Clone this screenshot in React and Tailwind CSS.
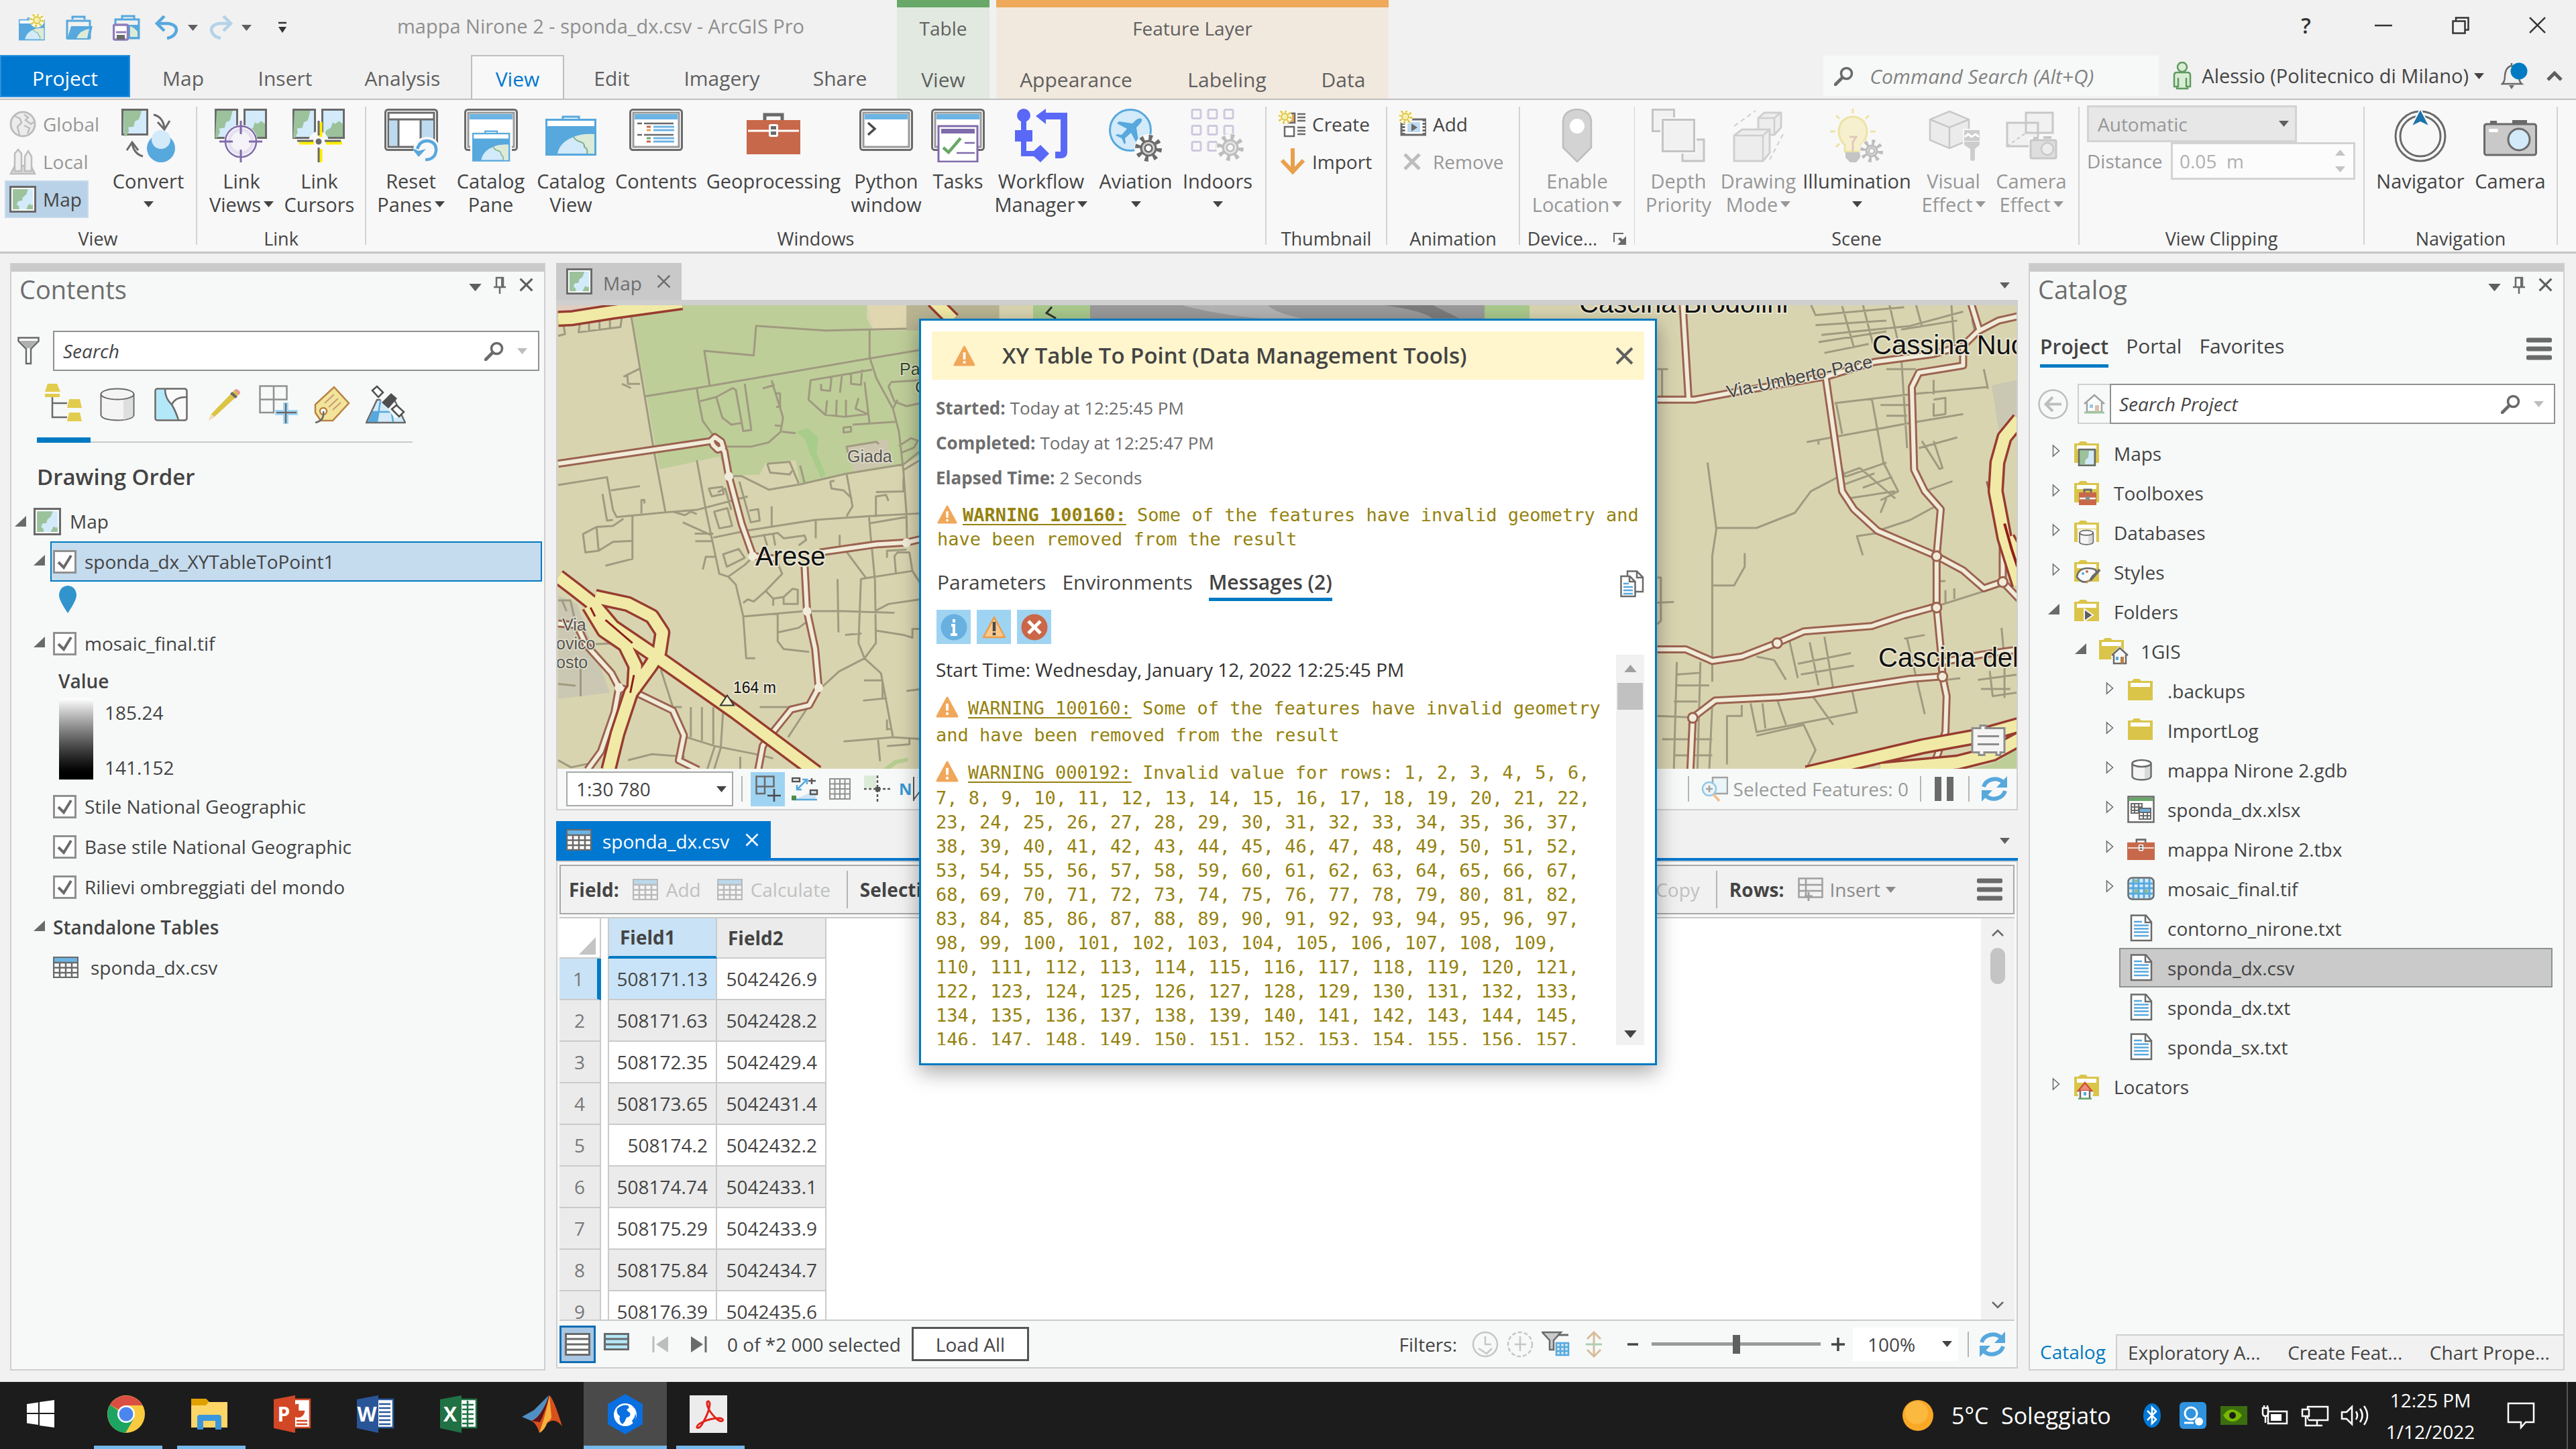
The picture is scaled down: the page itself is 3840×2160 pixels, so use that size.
import React from "react";

const GRAY = "#6a6a6a";
const BLUE = "#57a8dd";
const PALE = "#d2eaf9";
const GREEN = "#9cc29c";
const PURPLE = "#7f6bab";

function Svg({ w, h, vb, className = "", children }) {
  return (
    <svg width={w} height={h} viewBox={vb || `0 0 ${w} ${h}`} fill="none" className={`shrink-0 ${className}`} aria-hidden="true">
      {children}
    </svg>
  );
}

/* ---------- small shared glyphs ---------- */

const Caret = ({ className = "" }) => (
  <Svg w={15} h={9} className={`inline-block ${className}`}>
    <path d="M0 0h15L7.500 9z" fill="currentColor" />
  </Svg>
);

const Cross = ({ size = 20, sw = 3, className = "" }) => (
  <Svg w={size} h={size} vb="0 0 20 20" className={className}>
    <path d="M1.500 1.500l17 17M18.500 1.500l-17 17" stroke="currentColor" strokeWidth={sw} />
  </Svg>
);

const Pin = () => (
  <Svg w={18} h={26}>
    <path d="M4 16V2h10v14M0 16h18M9 16v10" stroke={GRAY} strokeWidth="2.500" />
    <path d="M11 3h2v12h-2z" fill={GRAY} />
  </Svg>
);

const Magnifier = ({ size = 29 }) => (
  <Svg w={size} h={size} vb="0 0 29 29">
    <circle cx="18.500" cy="10.500" r="8" stroke={GRAY} strokeWidth="3.600" />
    <path d="M12.500 16.500L2 27" stroke={GRAY} strokeWidth="4.600" strokeLinecap="round" />
  </Svg>
);

const Hamburger = () => (
  <Svg w={38} h={34}>
    <path d="M3 4h32M3 17h32M3 30h32" stroke={GRAY} strokeWidth="7" strokeLinecap="round" />
  </Svg>
);

const Refresh = () => (
  <Svg w={42} h={40}>
    <path d="M5 17C8 6 24 1 34 10M37 23C34 34 18 39 8 30" stroke={BLUE} strokeWidth="6" />
    <path d="M40 1v17H24zM2 39V22h16z" fill={BLUE} />
  </Svg>
);

const WarnIcon = ({ w = 32, className = "" }) => (
  <Svg w={w} h={w} vb="0 0 32 32" className={className}>
    <path d="M16 3L30 29H2z" fill="#f0a75a" stroke="#f0a75a" strokeWidth="3" strokeLinejoin="round" />
    <path d="M16 11v10M16 23.500v3.500" stroke="#fff" strokeWidth="3.600" />
  </Svg>
);

const Sun = ({ x, y, r = 5 }) => (
  <g>
    <circle cx={x} cy={y} r={r + 6} fill="#fffbe0" />
    <circle cx={x} cy={y} r={r + 3.500} stroke="#dcc445" strokeWidth="4" strokeDasharray="2.600 4.080" />
    <circle cx={x} cy={y} r={r} fill="#f5efae" stroke="#dcc445" strokeWidth="2" />
  </g>
);

const Gear = ({ x, y, r = 12, color = GRAY, fill = "#cfcfcf" }) => (
  <g>
    <circle cx={x} cy={y} r={r + 8} fill="#f8f8f8" />
    <circle cx={x} cy={y} r={r + 3} stroke={color} strokeWidth="8" strokeDasharray={`${(r + 3) * 0.33} ${(r + 3) * 0.455}`} />
    <circle cx={x} cy={y} r={r - 2} fill={fill} stroke={color} strokeWidth="3" />
    <circle cx={x} cy={y} r={r / 2.400} fill="#f8f8f8" stroke={color} strokeWidth="2.500" />
  </g>
);

const Tile = ({ x = 0, y = 0, w = 38, h = 38, flip }) => (
  <g>
    <rect x={x + 1.500} y={y + 1.500} width={w - 3} height={h - 3} fill={PALE} stroke={GRAY} strokeWidth="3" />
    {flip ? (
      <path d={`M${x + w - 3} ${y + h / 2}l-6 -4l-5 4l-4 -2l-3 8l-7 4l-2 ${h / 2 - 13}h27z`} fill={GREEN} />
    ) : (
      <path d={`M${x + 3} ${y + 3}h${w * 0.68}l-4 ${h * 0.32}l-6 3l-2 8l-8 1l1 6l-4 ${h * 0.18}h-3z`} fill={GREEN} />
    )}
  </g>
);

const MapIcon = ({ size = 40 }) => (
  <Svg w={size} h={size} vb="0 0 40 40">
    <rect x="1.500" y="1.500" width="37" height="37" fill="#fff" stroke={GRAY} strokeWidth="3" />
    <path d="M5 5h30v30H5z" fill={PALE} />
    <path d="M5 5h23l-3 8l-5 4l-1 5l-6 1l-2 5l3 2l1 5H5z" fill={GREEN} />
    <path d="M35 35H25l4-8l4 2l2-1z" fill={GREEN} />
  </Svg>
);

const Bag = ({ w = 76, h = 60 }) => (
  <Svg w={w} h={h} vb="0 0 76 60">
    <BagShape />
  </Svg>
);

const BagShape = () => (
  <g>
    <path d="M26 7V2h24v5" stroke={BLUE} strokeWidth="3" />
    <path d="M0 5h76v55H0z" fill={BLUE} />
    <path d="M3 8h70v8H3z" fill="#fff" />
    <path d="M18 57C22 38 42 27 73 28V57z" fill={PALE} />
    <path d="M42 32C52 28 62 27 73 28V57H62q2-8-4-10q2-6-7-8q-6-2-9-7z" fill="#dcebd8" />
    <path d="M42 32q4 6 9 7q8 2 7 8q6 3 4 10" stroke="#7fb08a" strokeWidth="2" />
  </g>
);

const Monitor = ({ children }) => (
  <g>
    <rect x="1.500" y="1.500" width="77" height="60" rx="4" fill="#fff" stroke={GRAY} strokeWidth="3" />
    <rect x="6" y="6" width="68" height="51" fill="#fff" stroke="#9a9a9a" strokeWidth="3" />
    <path d="M8 8h64v8H8z" fill="#6cb4e4" />
    {children}
  </g>
);

const TableIcon = ({ w = 38, h = 32, faded }) => (
  <Svg w={w} h={h} vb="0 0 38 32" className={faded ? "opacity-40" : ""}>
    <rect x="1" y="1" width="36" height="30" fill="#fff" stroke={GRAY} strokeWidth="2.500" />
    <path d="M2 2h34v6H2z" fill="#6cb4e4" />
    <path d="M1 9h36M1 16.500h36M1 24h36M10 9v22M19 9v22M28 9v22" stroke={GRAY} strokeWidth="2.500" />
  </Svg>
);

/* ---------- ribbon icons, all on an 80px box ---------- */

const ConvertIcon = () => (
  <Svg w={80} h={80}>
    <Tile w={40} h={40} />
    <path d="M48 9q14 3 16 20M54 20l10 11l8-13" stroke={GRAY} strokeWidth="3" />
    <path d="M32 71q-14-4-16-20M8 62l8-12l9 12" stroke={GRAY} strokeWidth="3" />
    <circle cx="59" cy="59" r="21" fill={BLUE} />
    <circle cx="59" cy="46" r="14" fill={PALE} />
  </Svg>
);

const LinkViewsIcon = () => (
  <Svg w={80} h={80}>
    <Tile w={35} h={45} />
    <Tile x={43} w={35} h={45} flip />
    <circle cx="39" cy="49" r="25" fill="#f8f8f8" />
    <circle cx="39" cy="49" r="20" fill="#e6e1f0" />
    <circle cx="39" cy="49" r="15" fill="#f5f3f8" />
    <circle cx="39" cy="49" r="23" stroke={PURPLE} strokeWidth="2.500" />
    <path d="M39 18v20M39 61v19M7 49h20M51 49h20" stroke={PURPLE} strokeWidth="3" />
  </Svg>
);

const LinkCursorsIcon = () => (
  <Svg w={80} h={80}>
    <Tile w={35} h={45} />
    <Tile x={43} w={35} h={45} flip />
    <circle cx="39" cy="49" r="15" fill="#f8f8f8" />
    <path d="M42 20v22M42 60v20M10 51h22M50 51h24" stroke="#fdee00" strokeWidth="5" />
    <path d="M39 18v22M39 58v22M7 48h24M48 48h24" stroke={GRAY} strokeWidth="3" />
    <circle cx="39" cy="49" r="4.500" fill={GRAY} />
  </Svg>
);

const ResetPanesIcon = () => (
  <Svg w={80} h={80}>
    <rect x="1.500" y="1.500" width="77" height="60" rx="4" fill="#fff" stroke={GRAY} strokeWidth="3" />
    <rect x="6" y="6" width="68" height="51" fill="#fff" stroke={GRAY} strokeWidth="3" />
    <path d="M7 17h14v38H7zM54 17h19v38H54z" fill="#bddaf0" />
    <path d="M6 16h68M21 16v40M54 16v40" stroke={GRAY} strokeWidth="3" />
    <circle cx="63" cy="62" r="20" fill="#f8f8f8" />
    <path d="M49 60q4-13 16-12q13 2 12 15q-2 13-16 13" stroke={BLUE} strokeWidth="4.500" />
    <path d="M40 58l11 14l11-12l-11 3z" fill={BLUE} />
  </Svg>
);

const CatalogPaneIcon = () => (
  <Svg w={80} h={80}>
    <Monitor />
    <path d="M9 34h62v46H9z" fill="#f8f8f8" />
    <g transform="translate(12 32) scale(.74 .78)">
      <BagShape />
    </g>
  </Svg>
);

const ContentsIcon = () => (
  <Svg w={80} h={80}>
    <Monitor>
      <path d="M12 22h7M22 22h44M12 39h7M22 39h44" stroke={GRAY} strokeWidth="2.500" />
      <path d="M36 27h31M36 32h31M36 44h31M36 49h31" stroke="#6cb4e4" strokeWidth="3" />
      <path d="M26 27h6M26 49h6" stroke="#c8684a" strokeWidth="3" />
      <path d="M26 32h6" stroke="#e9a04c" strokeWidth="3" />
      <path d="M26 44h6" stroke="#68a868" strokeWidth="3" />
    </Monitor>
  </Svg>
);

const ToolboxShape = () => (
  <g>
    <path d="M27 18V9h26v9" stroke={GRAY} strokeWidth="5" />
    <path d="M0 17h80v51H0z" fill="#c8684a" />
    <path d="M2 33h76" stroke="#fff" strokeWidth="3" />
    <rect x="33" y="23" width="14" height="19" rx="3" fill="#fff" />
    <path d="M36 26h8v5h-8zM36 34h8v5h-8z" fill={GRAY} />
  </g>
);

const ToolboxIcon = () => (
  <Svg w={80} h={80}>
    <ToolboxShape />
  </Svg>
);

const PythonIcon = () => (
  <Svg w={80} h={80}>
    <Monitor>
      <path d="M13 21l10 9l-10 9" stroke="#4a4a4a" strokeWidth="3.500" />
    </Monitor>
  </Svg>
);

const TasksIcon = () => (
  <Svg w={80} h={80}>
    <Monitor />
    <rect x="11" y="26" width="58" height="53" fill="#fff" stroke={PURPLE} strokeWidth="3" />
    <path d="M15 30h50v7H15z" fill={PURPLE} />
    <path d="M50 51h15M38 66h27" stroke={PURPLE} strokeWidth="2.500" />
    <path d="M18 58l8 7l18-21" stroke="#68a868" strokeWidth="4.500" />
  </Svg>
);

const WorkflowIcon = () => (
  <Svg w={80} h={80} className="text-[#5a68f7]">
    <circle cx="14" cy="10" r="10" fill="currentColor" />
    <path d="M1 32h26v17H1z" fill="currentColor" />
    <path d="M14 10v57h26" stroke="currentColor" strokeWidth="8" />
    <path d="M39 54l13 13l-13 13l-10-9v-8z" fill="currentColor" />
    <path d="M42 11h32v54q0 4-4 4h-9" stroke="currentColor" strokeWidth="10" />
    <path d="M47 0v23L32 11z" fill="currentColor" />
  </Svg>
);

const AviationIcon = () => (
  <Svg w={80} h={80}>
    <circle cx="32" cy="32" r="30.500" fill={PALE} stroke={BLUE} strokeWidth="3" />
    <path d="M49 15c-5-2-8 1-14 7l-20-3-3 3 15 8-8 9-7-1-2 2 9 4 4 9 2-2-1-7 9-8 8 15 3-3-3-20c6-6 9-9 8-13z" fill={BLUE} />
    <Gear x={59} y={59} r={13} />
  </Svg>
);

const IndoorsIcon = () => (
  <Svg w={80} h={80}>
    {[0, 24, 48].map((y) =>
      [0, 24, 48].map((x) => <rect key={`${x}-${y}`} x={x + 2} y={y + 1.500} width="13" height="13" rx="2" stroke="#cfc8e0" strokeWidth="3" />)
    )}
    <Gear x={59} y={58} r={13} color="#bdbdbd" fill="#e4e4e4" />
  </Svg>
);

const LocationIcon = () => (
  <Svg w={80} h={80}>
    <path d="M19 58V18Q21 2 40 1Q59 2 61 18V58L40 79z" fill="#d3d3d3" stroke="#bdbdbd" strokeWidth="2.500" />
    <ellipse cx="40" cy="26" rx="11" ry="11" fill="#fff" />
  </Svg>
);

const DepthIcon = () => (
  <Svg w={80} h={80} className="text-[#c4c4c4]">
    <path d="M1.500 1.500h32v32h-32zM46 46h32v32H46z" fill="#f1f1f1" stroke="currentColor" strokeWidth="3" />
    <path d="M13 13h54v54H13z" fill="#f8f8f8" />
    <path d="M16.500 16.500h47v47h-47z" fill="#f1f1f1" stroke="currentColor" strokeWidth="3" />
  </Svg>
);

const DrawingModeIcon = () => (
  <Svg w={80} h={80} className="text-[#cfcfcf]">
    <path d="M40 14l9-8h25v22l-10 11H40z" fill="#ededed" stroke="currentColor" strokeWidth="3" />
    <path d="M40 14h24v24M64 14l9-8" stroke="currentColor" strokeWidth="2.500" />
    <path d="M4 40l12-9h41v35L47 78H4z" fill="#ededed" stroke="currentColor" strokeWidth="3" />
    <path d="M4 40h43v37M47 40l10-9" stroke="currentColor" strokeWidth="2.500" />
    <path d="M4 26L36 3M77 38L55 80" stroke="currentColor" strokeWidth="2" strokeDasharray="7 5" />
  </Svg>
);

const BulbIcon = () => (
  <Svg w={80} h={80}>
    <path d="M34 0v7M9 10l5 5M58 10l-5 5M0 34h8M60 34h8M9 57l5-5" stroke="#ede3a4" strokeWidth="3" />
    <path d="M22 64V54Q13 46 13 33Q15 13 34 12Q53 13 55 33Q55 46 46 54V64z" fill="#f6f0cf" stroke="#ede3a4" strokeWidth="3" />
    <path d="M29 42h10l-5 8v14" stroke="#e0c8b8" strokeWidth="3" />
    <path d="M23 65h22v8l-6 7h-9l-7-7z" fill="#c4c4c4" />
    <Gear x={62} y={63} r={10} color="#bdbdbd" fill="#e4e4e4" />
  </Svg>
);

const VisualIcon = () => (
  <Svg w={80} h={80} className="text-[#c8c8c8]">
    <path d="M34 4l29 12v31L34 59L5 47V16z" fill="#ebebeb" stroke="currentColor" strokeWidth="2.500" />
    <path d="M5 16l29 12l29-12M34 28v31" stroke="currentColor" strokeWidth="2.500" />
    <path d="M54 30h26v50H54z" fill="#f8f8f8" />
    <path d="M56 32h23v16H56zM56 49h23v5l-7 6v16q-4 4-7 0V60l-9-6z" fill="#cdcdcd" />
    <path d="M57 42l5-4l5 4l6-4l5 4" stroke="#fff" strokeWidth="3" />
  </Svg>
);

const CameraEffectIcon = () => (
  <Svg w={80} h={80} className="text-[#c8c8c8]">
    <path d="M32 6h40v30H32zM4 21h46v35H4z" fill="#f1f1f1" stroke="currentColor" strokeWidth="3" />
    <path d="M4 56l28-20" stroke="currentColor" strokeWidth="2" strokeDasharray="5 4" />
    <path d="M36 42h44v34H36z" fill="#f8f8f8" />
    <rect x="39" y="47" width="38" height="27" rx="2" fill="#dedede" stroke="currentColor" strokeWidth="3" />
    <circle cx="64" cy="60" r="9" fill="#ececec" stroke="currentColor" strokeWidth="2.500" />
    <path d="M43 44h8M58 43h12" stroke="currentColor" strokeWidth="4" />
  </Svg>
);

const NavigatorIcon = () => (
  <Svg w={80} h={80}>
    <circle cx="40" cy="41" r="37" stroke={GRAY} strokeWidth="3" />
    <circle cx="40" cy="41" r="30" stroke={GRAY} strokeWidth="3" />
    <path d="M40 0L54 27L40 20L26 27z" fill="#1c72ab" stroke="#f8f8f8" strokeWidth="2" />
  </Svg>
);

const CameraIcon = () => (
  <Svg w={80} h={80}>
    <path d="M10 21h10M43 20h22" stroke={GRAY} strokeWidth="6" />
    <rect x="1.500" y="23" width="77" height="46" rx="3" fill="#c9c9c9" stroke={GRAY} strokeWidth="3" />
    <circle cx="53" cy="46" r="16" fill={PALE} stroke={GRAY} strokeWidth="3" />
    <rect x="8" y="30" width="14" height="5" rx="2" fill="#fff" />
  </Svg>
);

/* ---------- title bar and tabs ---------- */

const tabClass = "flex h-[63px] items-center justify-center pt-[6px] text-[30px] leading-[40px] text-[#5f5f5f]";

function WindowHeader() {
  return (
    <header className="flex h-[149px] shrink-0 border-b-2 border-[#bfbfbf] bg-[#f1f1f1]">
      <div className="flex w-[1337px] shrink-0 flex-col">
        <div className="flex h-[84px] items-center pl-7">
          <div className="flex w-[564px] items-center text-[#5f5f5f]">
            <button aria-label="New project">
              <Svg w={40} h={40}>
                <g transform="translate(0 5) scale(.51 .57)">
                  <BagShape />
                </g>
                <Sun x={27} y={9} r={5} />
              </Svg>
            </button>
            <button aria-label="Open project" className="ml-[30px]">
              <Svg w={40} h={40}>
                <path d="M10 8V4h18v4M2 10h34v26H2z" stroke={BLUE} strokeWidth="3" />
                <path d="M8 18h32l-5 20H2z" fill={BLUE} />
                <path d="M16 36q5-12 19-14l-3 14z" fill="#dcebd8" />
              </Svg>
            </button>
            <button aria-label="Save project" className="ml-[30px]">
              <Svg w={41} h={40}>
                <path d="M14 8V3h18v5M4 16V8h35v28H24" stroke={BLUE} strokeWidth="3" />
                <path d="M24 16h16v20H24z" fill={BLUE} />
                <path d="M26 34V18q6 2 11 8v8z" fill="#dcebd8" />
                <rect x="1.500" y="16" width="21" height="22" rx="2" fill="#fff" stroke="#8f7dbb" strokeWidth="3.500" />
                <path d="M5 27h15" stroke="#8f7dbb" strokeWidth="3" />
                <path d="M6 31h12v7H6z" fill={GRAY} />
              </Svg>
            </button>
            <button aria-label="Undo" className="ml-[22px]">
              <Svg w={36} h={36}>
                <path d="M4 12H20Q32 14 32 22Q30 32 18 34" stroke={BLUE} strokeWidth="4.500" />
                <path d="M14 1L3 12l11 11" stroke={BLUE} strokeWidth="4.500" />
              </Svg>
            </button>
            <Caret className="ml-[13px]" />
            <button aria-label="Redo" className="ml-4 opacity-40">
              <Svg w={36} h={36}>
                <path d="M32 12H16Q4 14 4 22Q6 32 18 34" stroke={BLUE} strokeWidth="4.500" />
                <path d="M22 1l11 11l-11 11" stroke={BLUE} strokeWidth="4.500" />
              </Svg>
            </button>
            <Caret className="ml-[13px]" />
            <button aria-label="Customize" className="ml-10">
              <Svg w={12} h={18}>
                <path d="M0 2h12" stroke="#333" strokeWidth="2.500" />
                <path d="M0 8h12l-6 9z" fill="#333" />
              </Svg>
            </button>
          </div>
          <h1 className="whitespace-nowrap pb-1 text-[29px] leading-[40px] text-[#8f8f8f]">mappa Nirone 2 - sponda_dx.csv - ArcGIS Pro</h1>
        </div>
        <nav className="flex">
          <button className="flex h-[63px] w-[194px] items-center justify-center border-2 border-[#2a90dc] bg-[#0078d0] pt-[6px] text-[30px] leading-[40px] text-white">Project</button>
          <button className={`${tabClass} w-[158px]`}>Map</button>
          <button className={`${tabClass} w-[146px]`}>Insert</button>
          <button className={`${tabClass} w-[204px]`}>Analysis</button>
          <button className="relative z-10 flex h-[65px] w-[139px] items-center justify-center border-2 border-b-0 border-[#bfbfbf] bg-[#f8f8f8] pt-1 text-[30px] leading-[40px] text-[#0078d0]">View</button>
          <button className={`${tabClass} w-[142px]`}>Edit</button>
          <button className={`${tabClass} w-[186px]`}>Imagery</button>
          <button className={`${tabClass} w-[166px]`}>Share</button>
        </nav>
      </div>
      <div className="flex w-[138px] shrink-0 flex-col border-t-[11px] border-[#68a868] bg-[#e1e9e0]">
        <div className="flex h-[73px] items-center justify-center pb-3 text-[28px] text-[#5f5f5f]">Table</div>
        <button className={tabClass}>View</button>
      </div>
      <div className="ml-[10px] flex w-[585px] shrink-0 flex-col border-t-[11px] border-[#eea95b] bg-[#f2e9de]">
        <div className="flex h-[73px] items-center justify-center pb-3 text-[28px] text-[#5f5f5f]">Feature Layer</div>
        <div className="flex">
          <button className={`${tabClass} w-[238px]`}>Appearance</button>
          <button className={`${tabClass} w-[212px]`}>Labeling</button>
          <button className={`${tabClass} w-[135px]`}>Data</button>
        </div>
      </div>
      <div className="flex flex-1 flex-col text-[#333]">
        <div className="flex h-[83px] items-center justify-end pb-2">
          <button className="w-[115px] text-[32px] font-semibold" aria-label="Help">?</button>
          <button className="flex w-[115px] justify-center" aria-label="Minimize">
            <Svg w={26} h={4}><path d="M0 2h26" stroke="#333" strokeWidth="2.500" /></Svg>
          </button>
          <button className="flex w-[115px] justify-center" aria-label="Restore">
            <Svg w={26} h={26}>
              <path d="M1.500 6.500h18v18h-18zM6 6V1.500h18.500v18H20" stroke="#333" strokeWidth="2.500" />
            </Svg>
          </button>
          <button className="flex w-[115px] justify-center" aria-label="Close"><Cross size={27} sw={1.800} /></button>
        </div>
        <div className="flex h-[60px] items-center justify-end pr-5">
          <label className="flex h-[60px] w-[500px] items-center bg-[#f7f9f8] pl-4">
            <Magnifier />
            <input aria-label="Command Search" placeholder="Command Search (Alt+Q)" className="ml-6 w-full bg-transparent text-[30px] italic outline-none placeholder:text-[#838383]" />
          </label>
          <Svg w={28} h={42} className="ml-[21px]">
            <circle cx="14" cy="8" r="7" fill="#d9edd4" stroke="#5f9a5f" strokeWidth="2.500" />
            <path d="M2 20q0-4 4-4h16q4 0 4 4v17h-4v3H6v-3H2zM8 24v14M20 24v14" fill="#d9edd4" stroke="#5f9a5f" strokeWidth="2.500" />
          </Svg>
          <button className="ml-[15px] flex items-center whitespace-nowrap text-[29px] text-[#444]">
            Alessio (Politecnico di Milano)
            <Caret className="ml-2" />
          </button>
          <button aria-label="Notifications" className="ml-[25px]">
            <Svg w={40} h={40}>
              <path d="M2 32q4-3 4-12Q7 7 16 5Q26 7 27 20q0 9 4 12zM16 1v4" stroke={GRAY} strokeWidth="2.500" />
              <path d="M12 34h8l-4 6z" fill={GRAY} />
              <circle cx="27" cy="13" r="12.500" fill="#007ac2" />
            </Svg>
          </button>
          <button aria-label="Collapse ribbon" className="ml-7">
            <Svg w={24} h={15}><path d="M2 13L12 3l10 10" stroke="#5f5f5f" strokeWidth="5" /></Svg>
          </button>
        </div>
      </div>
    </header>
  );
}

/* ---------- ribbon ---------- */

function RibbonGroup({ label, width, launcher, children }) {
  return (
    <section className={`flex shrink-0 ${width}`}>
      <div className="flex flex-1 flex-col">
        <div className="flex h-[189px] px-[7px]">{children}</div>
        <div className="flex h-[35px] items-center justify-center text-[27px] leading-[35px] text-[#444]">
          {label}
          {launcher && (
            <Svg w={20} h={18} className="ml-6">
              <path d="M1 14V1h14" stroke={GRAY} strokeWidth="2" />
              <path d="M19 5v13H6l5-5l-4-4l3-2l4 3z" fill={GRAY} />
            </Svg>
          )}
        </div>
      </div>
      <div className="mt-[10px] h-[206px] w-[2px] bg-[#d3d3d3]" />
    </section>
  );
}

function RibbonButton({ icon, line1, line2, caret, width, disabled }) {
  return (
    <button disabled={disabled} className={`flex shrink-0 flex-col items-center whitespace-nowrap pt-[13px] text-[29px] leading-[35px] ${width} ${disabled ? "text-[#979797]" : "text-[#444]"}`}>
      {icon}
      <span className="mt-[10px]">{line1}</span>
      <span className="flex h-[35px] items-center">
        {line2}
        {caret && <Caret className={line2 ? "ml-1" : ""} />}
      </span>
    </button>
  );
}

function SmallButton({ icon, label, disabled, active }) {
  return (
    <button
      disabled={disabled}
      className={`flex h-14 items-center gap-[10px] whitespace-nowrap border-2 pl-[5px] pr-2 text-[28px] leading-[36px] ${
        active ? "border-[#c6daec] bg-[#b9d2e8]" : "border-transparent"
      } ${disabled ? "text-[#979797]" : "text-[#444]"}`}
    >
      {icon}
      {label}
    </button>
  );
}

function Ribbon() {
  return (
    <div className="flex h-[229px] shrink-0 border-b-[3px] border-[#c4c4c4] bg-[#f8f8f8]">
      <RibbonGroup label="View" width="w-[294px]">
        <div className="flex w-[152px] flex-col items-start pt-[8px]">
          <SmallButton
            disabled
            label="Global"
            icon={
              <Svg w={40} h={40}>
                <circle cx="20" cy="20" r="18" fill="#ececec" stroke="#bdbdbd" strokeWidth="3" />
                <path d="M8 8l8 4l2 6l-6 6l3 12M22 6l6 4l-4 4l8 6l4-3M22 22l8 4l-3 8" stroke="#bdbdbd" strokeWidth="2.500" />
              </Svg>
            }
          />
          <SmallButton
            disabled
            label="Local"
            icon={
              <Svg w={40} h={40}>
                <path d="M2 38l6-12h24l6 12z" fill="#dadada" stroke="#bdbdbd" strokeWidth="2.500" />
                <path d="M8 34V8l5-6l5 6v26zM23 34V12l5-8l5 8v22z" fill="#efefef" stroke="#bdbdbd" strokeWidth="2.500" />
              </Svg>
            }
          />
          <SmallButton active label="Map" icon={<MapIcon />} />
        </div>
        <RibbonButton icon={<ConvertIcon />} line1="Convert" caret width="w-[124px]" />
      </RibbonGroup>
      <RibbonGroup label="Link" width="w-[252px]">
        <RibbonButton icon={<LinkViewsIcon />} line1="Link" line2="Views" caret width="w-[118px]" />
        <RibbonButton icon={<LinkCursorsIcon />} line1="Link" line2="Cursors" width="w-[114px]" />
      </RibbonGroup>
      <RibbonGroup label="Windows" width="w-[1342px]">
        <RibbonButton icon={<ResetPanesIcon />} line1="Reset" line2="Panes" caret width="w-[119px]" />
        <RibbonButton icon={<CatalogPaneIcon />} line1="Catalog" line2="Pane" width="w-[119px]" />
        <RibbonButton icon={<span className="flex h-20 items-center"><Bag /></span>} line1="Catalog" line2="View" width="w-[120px]" />
        <RibbonButton icon={<ContentsIcon />} line1="Contents" width="w-[134px]" />
        <RibbonButton icon={<ToolboxIcon />} line1="Geoprocessing" width="w-[216px]" />
        <RibbonButton icon={<PythonIcon />} line1="Python" line2="window" width="w-[120px]" />
        <RibbonButton icon={<TasksIcon />} line1="Tasks" width="w-[94px]" />
        <RibbonButton icon={<WorkflowIcon />} line1="Workflow" line2="Manager" caret width="w-[154px]" />
        <RibbonButton icon={<AviationIcon />} line1="Aviation" caret width="w-[128px]" />
        <RibbonButton icon={<IndoorsIcon />} line1="Indoors" caret width="w-[116px]" />
      </RibbonGroup>
      <RibbonGroup label="Thumbnail" width="w-[180px]">
        <div className="flex flex-col items-start pl-1 pt-[8px]">
          <SmallButton
            label="Create"
            icon={
              <Svg w={40} h={40}>
                <path d="M8 4h16v14H8z" fill="#eea95b" stroke={GRAY} strokeWidth="2.500" />
                <path d="M9 24h14v14H9z" fill="#fff" stroke={GRAY} strokeWidth="2.500" />
                <path d="M28 5h12M28 10h12M28 15h12M28 25h12M28 30h12M28 35h12" stroke={GRAY} strokeWidth="2.500" />
                <Sun x={9} y={9} r={5} />
              </Svg>
            }
          />
          <SmallButton
            label="Import"
            icon={
              <Svg w={40} h={40}>
                <path d="M21 0v34M5 18l16 17l16-17" stroke="#e9a04c" strokeWidth="6" />
              </Svg>
            }
          />
        </div>
      </RibbonGroup>
      <RibbonGroup label="Animation" width="w-[198px]">
        <div className="flex flex-col items-start pl-1 pt-[8px]">
          <SmallButton
            label="Add"
            icon={
              <Svg w={40} h={40}>
                <path d="M3 13h37v23H3z" fill="#fff" stroke={GRAY} strokeWidth="3" />
                <path d="M6 13v23M37 13v23" stroke={GRAY} strokeWidth="5" strokeDasharray="3 2" />
                <path d="M12 17h19v15H12z" fill="#bddaf0" />
                <path d="M18 19l9 6l-9 6z" fill={GRAY} />
                <Sun x={9} y={9} r={5} />
              </Svg>
            }
          />
          <SmallButton disabled label="Remove" icon={<Svg w={40} h={40}><path d="M8 9l22 22M30 9L8 31" stroke="#bdbdbd" strokeWidth="5" /></Svg>} />
        </div>
      </RibbonGroup>
      <RibbonGroup label="Device..." width="w-[171px]" launcher>
        <RibbonButton disabled icon={<LocationIcon />} line1="Enable" line2="Location" caret width="w-[156px]" />
      </RibbonGroup>
      <RibbonGroup label="Scene" width="w-[663px]">
        <RibbonButton disabled icon={<DepthIcon />} line1="Depth" line2="Priority" width="w-[116px]" />
        <RibbonButton disabled icon={<DrawingModeIcon />} line1="Drawing" line2="Mode" caret width="w-[122px]" />
        <RibbonButton icon={<BulbIcon />} line1="Illumination" caret width="w-[172px]" />
        <RibbonButton disabled icon={<VisualIcon />} line1="Visual" line2="Effect" caret width="w-[116px]" />
        <RibbonButton disabled icon={<CameraEffectIcon />} line1="Camera" line2="Effect" caret width="w-[116px]" />
      </RibbonGroup>
      <RibbonGroup label="View Clipping" width="w-[425px]">
        <div className="flex flex-col pl-1 pt-2 text-[28px] text-[#979797]">
          <div className="grid h-[55px] w-[313px] border-[3px] border-[#d3d3d3] bg-[#e7e7e7]">
            <select disabled aria-label="View clipping mode" className="col-start-1 row-start-1 appearance-none bg-transparent pl-[13px] text-[#979797] opacity-100">
              <option>Automatic</option>
            </select>
            <Caret className="col-start-1 row-start-1 mr-[9px] self-center justify-self-end text-[#5f5f5f]" />
          </div>
          <div className="flex h-14 items-center">
            <label htmlFor="distance" className="w-[125px]">Distance</label>
            <div className="flex h-14 w-[275px] items-center border-[3px] border-[#d3d3d3] bg-[#fcfcfc] pr-3">
              <input id="distance" disabled defaultValue="0.05  m" className="w-full bg-transparent pl-[10px] text-[28px] text-[#b0b0b0]" />
              <div className="flex flex-col gap-4 text-[#c4c4c4]">
                <Caret className="rotate-180" />
                <Caret />
              </div>
            </div>
          </div>
        </div>
      </RibbonGroup>
      <RibbonGroup label="Navigation" width="w-[288px]">
        <RibbonButton icon={<NavigatorIcon />} line1="Navigator" width="w-[152px]" />
        <RibbonButton icon={<CameraIcon />} line1="Camera" width="w-[116px]" />
      </RibbonGroup>
    </div>
  );
}

/* ---------- contents pane ---------- */

function PaneTitle({ title }) {
  return (
    <div className="flex h-[78px] items-center border-t-[11px] border-[#cacaca] pl-3 pr-4">
      <h2 className="flex-1 pb-4 text-[38px] leading-[50px] text-[#6e6e6e]">{title}</h2>
      <div className="flex items-center gap-[20px] pb-7 text-[#5f5f5f]">
        <Caret className="mt-2 scale-125" />
        <Pin />
        <Cross size={21} sw={3} />
      </div>
    </div>
  );
}

const TriOpen = ({ className = "" }) => (
  <Svg w={17} h={16} className={className}><path d="M17 0v16H0z" fill={GRAY} /></Svg>
);

const TriClosed = ({ className = "" }) => (
  <Svg w={12} h={20} className={className}><path d="M1.500 2L10.500 10l-9 8z" stroke={GRAY} strokeWidth="1.500" /></Svg>
);

function LayerCheck({ id, label }) {
  return (
    <>
      <span className="grid">
        <input id={id} type="checkbox" defaultChecked className="col-start-1 row-start-1 size-[35px] appearance-none border-[3px] border-[#909090] bg-white" />
        <Svg w={35} h={35} className="pointer-events-none col-start-1 row-start-1">
          <path d="M8 18l8 8l11-18" stroke={GRAY} strokeWidth="4" />
        </Svg>
      </span>
      <label htmlFor={id} className="ml-3">{label}</label>
    </>
  );
}

function ContentsPane() {
  const modes = [
    <Svg w={56} h={58} key="order">
      <path d="M4 0h14l5 12H0zM0 15h22v5H0zM36 23h16l3 13H33zM36 43h16l3 13H33z" fill="#e2cc4d" />
      <path d="M11 20v30h22M11 29h22" stroke={GRAY} strokeWidth="2.500" />
    </Svg>,
    <Svg w={52} h={50} key="source">
      <path d="M1.500 9v32q2 7 24.500 7.500q22-.500 24.500-7.500V9" fill="#f4f4f4" stroke={GRAY} strokeWidth="2" />
      <path d="M35 17l14-4v30l-14 5z" fill="#dedede" />
      <ellipse cx="26" cy="9.500" rx="24.500" ry="8" fill="#f4f4f4" stroke={GRAY} strokeWidth="2" />
    </Svg>,
    <Svg w={50} h={50} key="selection">
      <rect x="1.500" y="1.500" width="47" height="47" rx="3" fill="#fafafa" stroke={GRAY} strokeWidth="2.500" />
      <path d="M3 3h13q0 14 10 23q5 10 10 21H3z" fill="#b3e8f8" />
      <path d="M16 2q0 14 10 23q6 10 10 23M26 25q6-12 22-11" stroke={GRAY} strokeWidth="2.500" />
    </Svg>,
    <Svg w={50} h={50} key="editing">
      <path d="M39 4l7 6L9 44l-8 5l4-10z" fill="#dcc445" />
      <path d="M5 39l5 5l-9 5z" fill="#f4dcc0" />
      <path d="M36 6l8 7l-3 3l-8-7z" fill={GRAY} />
      <path d="M39 4q3-4 7 0q4 3 0 7z" fill="#e59a90" />
    </Svg>,
    <Svg w={58} h={58} key="snapping">
      <path d="M1.500 1.500h40v20h-40zM1.500 21v20H22V1.500" stroke="#909090" strokeWidth="2.500" />
      <path d="M40 26v32M24 41h34" stroke="#a5d8f8" strokeWidth="8" />
      <path d="M40 27v30M26 41h30" stroke={GRAY} strokeWidth="2.500" />
    </Svg>,
    <Svg w={54} h={56} key="labeling">
      <path d="M30 2l22 24L28 52H10L2 40V28z" fill="#f2e49a" stroke="#b98243" strokeWidth="2.500" />
      <circle cx="14" cy="38" r="5" fill="#fff" stroke="#b98243" strokeWidth="2.500" />
      <path d="M14 38q2 14-12 17" stroke={GRAY} strokeWidth="2.500" />
      <path d="M16 26l14-13M22 32l14-13M28 36l12-11" stroke="#c99a78" strokeWidth="2" />
    </Svg>,
    <Svg w={60} h={58} key="perspective">
      <path d="M17 22h26l16 34H1z" fill="#d2eaf9" stroke={GRAY} strokeWidth="2.500" />
      <path d="M10 40h10l-3 15H3z" fill={BLUE} />
      <path d="M10 40h42M22 24l-5 31M36 24l5 31" stroke={BLUE} strokeWidth="2.500" />
      <path d="M10 5l12-5l34 42l-12 8z" fill="#f7f9f8" />
      <path d="M38 12l9 8L34 35l-10-9z" fill="#4f4f4f" />
      <path d="M10 8l7-6l9 9l-7 7zM39 36l7-6l11 10l-7 7z" fill="#fff" stroke="#4f4f4f" strokeWidth="2.500" />
    </Svg>,
  ];
  return (
    <aside className="flex w-[798px] shrink-0 flex-col border-2 border-[#cfcfcf] bg-[#f7f9f8] text-[28px] leading-[36px] text-[#444]">
      <PaneTitle title="Contents" />
      <div className="mt-[21px] flex items-center pl-[9px] pr-[7px]">
        <Svg w={33} h={42}>
          <path d="M1.500 1.500h30v5L20 18v22h-7V18L1.500 6.500z" fill="#fff" stroke={GRAY} strokeWidth="2.500" />
          <path d="M3 6h27L20 17h-6z" fill="#b0b0b0" />
        </Svg>
        <label className="ml-[20px] flex h-[60px] flex-1 items-center border-2 border-[#909090] bg-white pr-4">
          <input aria-label="Search" placeholder="Search" className="w-full pl-[13px] italic outline-none placeholder:text-[#444]" />
          <Magnifier />
          <Caret className="ml-5 text-[#bdbdbd]" />
        </label>
      </div>
      <div className="ml-[38px] mt-[17px] flex">
        {modes.map((icon, i) => (
          <button key={icon.key} aria-label={icon.key} className={`flex h-[90px] w-20 items-center justify-center ${i === 0 ? "border-b-8 border-[#007ac2] pb-5" : "border-b-2 border-[#cacaca] pb-[22px]"}`}>
            {icon}
          </button>
        ))}
      </div>
      <h3 className="ml-[38px] mt-[29px] text-[33px] font-semibold leading-[44px]">Drawing Order</h3>
      <div className="mt-[14px] flex h-[60px] items-center pl-[5px]">
        <TriOpen className="mr-[11px]" />
        <MapIcon size={41} />
        <span className="ml-[13px]">Map</span>
      </div>
      <div className="flex items-center pl-[33px] pr-[3px]">
        <TriOpen className="mb-1 mr-[8px]" />
        <div className="flex h-[60px] flex-1 items-center border-2 border-[#007ac2] bg-[#c5dbee] pl-[2px]">
          <LayerCheck id="lyr-points" label="sponda_dx_XYTableToPoint1" />
        </div>
      </div>
      <div className="h-[62px] pl-[71px] pt-[6px]">
        <Svg w={26} h={41}>
          <path d="M13 41Q0 22 0 14Q1 1 13 0Q25 1 26 14Q26 22 13 41z" fill="#3194cd" />
        </Svg>
      </div>
      <div className="flex h-[60px] items-center pl-[33px]">
        <TriOpen className="mb-1 mr-3" />
        <LayerCheck id="lyr-mosaic" label="mosaic_final.tif" />
      </div>
      <div className="flex h-[52px] items-center pl-[70px] font-semibold">Value</div>
      <div className="mb-[10px] flex gap-[17px] pl-[71px]">
        <div className="h-[121px] w-[51px] bg-gradient-to-b from-white to-black" />
        <div className="flex flex-col justify-between pt-[3px]">
          <span>185.24</span>
          <span>141.152</span>
        </div>
      </div>
      <div className="flex h-[60px] items-center pl-[62px]"><LayerCheck id="lyr-style" label="Stile National Geographic" /></div>
      <div className="flex h-[60px] items-center pl-[62px]"><LayerCheck id="lyr-base" label="Base stile National Geographic" /></div>
      <div className="flex h-[60px] items-center pl-[62px]"><LayerCheck id="lyr-relief" label="Rilievi ombreggiati del mondo" /></div>
      <div className="flex h-[60px] items-center pl-[33px] font-semibold">
        <TriOpen className="mb-1 mr-3" />
        Standalone Tables
      </div>
      <div className="flex h-[60px] items-center pl-[62px]">
        <TableIcon />
        <span className="ml-[18px]">sponda_dx.csv</span>
      </div>
    </aside>
  );
}

/* ---------- map drawing ---------- */

const westStreets =
  "M270 150L345 525L385 705M318 380L490 357L1078 272L1235 250M533 350L515 252L680 265L688 182L920 195L1190 190M490 357L497 395L510 450L545 490M497 395L555 382L610 357L620 362L645 478L672 475L650 345M555 382L575 440L605 460L640 455M590 522L670 522L730 510L770 480L778 440L745 350L740 335M710 358L750 348M750 370L768 372V410M755 410L772 410M750 462L775 464M775 480L820 484M1075 305L990 318L870 335L863 390L918 432L985 438L1060 430M1050 340L1067 458M1067 195V270L1090 330L1145 415L1165 480L1180 590L1190 710L1192 790M980 482L1005 480V466L980 468ZM1010 460L1155 452M1145 415L1160 390M1235 335L1140 340L1130 352L1150 395L1190 408L1235 400M940 325L935 365L905 362V345M975 318L968 370M1005 315V345L1038 348L1042 305M925 392L920 432M957 390L955 438M988 390V438M1030 385L1020 415L1060 430M1165 520L1205 498L1228 505L1215 525L1170 540M600 605L640 605L730 643L835 628L990 598L1180 572L1235 535M995 540L990 522L1090 508L1098 515M1180 588L1235 560M27 630L190 608L210 700L222 720L385 707L490 700L660 662M175 655L190 730L210 728M203 645L300 633M305 710V672L315 672V682M275 718V838L185 857M162 815L118 820L110 768L155 748L210 745L245 725M155 748L162 815L210 790L275 787M410 705L450 715L470 705L490 712M490 560L520 700L565 880L595 888L620 910L645 1000L655 1118L685 1118M595 888L650 855L668 840M443 735L540 772M483 767H545M485 788H540M510 868L520 832H550M545 778L660 758L885 728L1060 718L1235 710M530 640L575 635L580 655L540 662ZM548 705L592 695L608 745L565 752ZM560 650L585 640L605 700M632 620L670 735L700 730L695 698L665 702M665 778L760 765L780 780L850 772L855 785L830 800M578 825L630 810L650 835L590 860ZM725 570L800 565L830 625M725 570L735 595L800 600L808 590M835 575L850 625M990 598L1010 690L990 718M935 620L940 640L980 645L1008 668M935 620L950 618M1088 650L1180 648V610M1130 675L1122 658L1088 662V720M1065 718L1070 770L1075 810M1065 738L1190 720M740 690V745M713 768L725 800M745 768L752 800M887 728V780M967 770V800M645 1000L850 985L980 985L1150 990M760 990V1070L780 1092L865 1100M760 1045L830 1032L865 1010M720 928L745 950V970M745 950L780 945L810 922L827 925V965L780 965V945M645 962L660 952L680 958L720 928L775 880L755 840M990 818L1055 892L1038 895L1030 1075L1050 1118L1088 1075L1085 900L1075 810M1055 892L1210 872L1235 905M1155 880L1150 830L1160 820H1200L1210 872M1125 835V815L1190 812M960 895L963 1045M900 1205L965 1155L1050 1118L1105 1160L1145 1340M985 1052L1040 1048M1085 985L1130 965L1235 952M1088 1040L1180 1052L1210 1060V1035H1235M1048 1180H1110V1230M1045 1237L1125 1230M1125 1290V1318L1140 1316M980 1352L1145 1340L1235 1345M1095 1345L1102 1408M1125 1365L1200 1360V1345M1190 1210L1235 1205M700 1255H820M865 1250L795 1340M415 1255H440M455 1340L550 1365L700 1390L745 1400M470 1255V1340M507 1255V1350M545 1255V1360M578 1262L570 1370L548 1430M550 1365L525 1430M635 1395V1430M260 1405L340 1388L450 1395M370 1150L410 1255M145 1078L240 1075M27 1190L85 1195M102 1225V1140M27 955H68L80 1000M40 955L55 985M240 345L270 357M245 325L300 302M258 322L260 345H300M27 1405L70 1425L125 1415M27 210L50 205L45 180L30 178M95 200L100 175L240 155L235 185ZM130 172V198M165 165V193M200 160V190";
const westLanes = "M27 570L430 520L540 506M570 520L582 535L597 605L640 740L678 830L760 838M900 820L1090 797L1190 792L1235 783M850 860L858 985L885 1090L897 1200L865 1250L805 1262L740 1330L710 1365L695 1432M27 1020L90 1025L120 1080L205 1160L230 1200L300 1220L410 1265L447 1335L430 1405L495 1432M205 1160L230 1200L215 1270L170 1380L125 1432M538 505L550 495L572 508L578 525L560 530L545 518Z";
const westHighways = "M27 162L75 160L210 142L440 115M150 945L260 965L340 1000L375 1045L365 1100L335 1140L270 1215L225 1330L195 1432M130 970L180 1040L250 1080L285 1140L280 1210M27 888L85 925L145 965L210 1030L350 1110L620 1270L890 1440M1280 110L1345 165";
const eastStreets =
  "M97 560L112 745L105 820V1170M112 742L180 742L245 700L272 640L330 590L355 575M160 812V850L142 902H105M272 120L280 150L430 128M280 178L400 165M290 205L440 180L530 140M285 225L400 195M295 255L370 230M325 125L345 240M360 120L378 235M405 120L425 260L435 520M425 190L520 165M450 120L460 180M312 395L440 370L570 350M265 503L440 450L530 425M285 495V510M315 395L325 480M375 380L395 560L420 640L390 665M355 575L415 660M330 600L400 560M330 620L380 590M360 630L410 600M335 660L415 640M400 660L390 700M480 395V430L500 425V380L480 385M460 500L490 578L495 575L480 500M455 520L520 490M465 640L512 612M390 755L350 765L360 818M385 750L440 720L485 680M485 960L590 905M500 915V950M515 910V940M485 890H500M12 950L40 948M12 880L18 880V1000L12 1010M45 1115L40 1412M85 1115L80 1412M45 1150L85 1145M45 1180H100M40 1225H80M12 1265L80 1270M105 1235L100 1412M155 1235V1265H130V1400M105 1330H20M105 1375H40M170 1230L180 1310L350 1255L340 1180M215 1220L230 1290M190 1230L195 1300M295 1045L310 1190M235 1050L250 1160M270 1060L285 1180M250 1120L340 1090M255 1150L345 1125M180 1100L210 1110L230 1165M275 1210L310 1290M435 1050L465 1260M430 1050L465 1040M180 1320L260 1290L280 1360L265 1410M500 1165L525 1160M555 1165L622 1150M575 1140L580 1210L622 1200M600 1130V1215M560 1190H610M595 1020L600 1110M565 300L572 355M320 560L330 600M390 400H440M400 430H435M400 300H450M480 330V370M510 120L515 230M545 160L550 200M12 300H30M20 300V380";
const eastLanes = "M543 115L558 195M55 120L65 385M12 385L75 385L140 365L300 320L380 280L480 258L530 235L555 195L590 165L625 152M530 235V290L455 310L443 350L447 580L465 640L492 690L485 820M297 320L325 640L345 690L385 750L485 820L530 860L565 910L597 892M485 820V960L492 1080L495 1155L502 1210L500 1310L485 1380L490 1415M485 960L430 985L375 1015L260 1030L215 1062L155 1100L105 1112L60 1080L12 1080M495 1155L440 1162L270 1205L220 1213L110 1222L72 1270L68 1415M495 1115L560 1095L625 1080M597 892L597 760L575 610M597 892L625 940";
const eastHighways = "M625 440L600 490L588 560L585 640L600 770L625 900M605 770L625 830M265 1425L460 1350L560 1320L625 1290M390 1415L520 1395L580 1370L625 1330";

function Roads({ d, kind }) {
  const strokes = {
    street: [["#a09a80", 3]],
    lane: [["#9b6350", 12], ["#f1ecda", 6]],
    highway: [["#983c30", 24], ["#f1eaa6", 17]],
  }[kind];
  return strokes.map(([color, width]) => (
    <path key={color} d={d} stroke={color} strokeWidth={width} strokeLinejoin="round" vectorEffect="non-scaling-stroke" />
  ));
}

function MapView() {
  const halo = { paintOrder: "stroke" };
  return (
    <svg viewBox="831 455 2175 692" preserveAspectRatio="xMidYMid slice" fill="none" className="min-h-0 w-full flex-1 bg-[#d9d4b0]" role="img" aria-label="Street map around Arese">
      <g transform="translate(820 390) scale(.4464 .5294)">
        <path d="M27 122H260L60 150H27z" fill="#e0cdc0" />
        <path d="M27 940L90 965L200 1215L27 1232z" fill="#cac8b2" />
        <path d="M268 122H1058V160L1080 195H1300V520L1180 572L920 612L835 628L820 560L720 568L700 600L600 605L565 550L365 586z" fill="#bece99" />
        <path d="M1060 122H1190V190H1080z" fill="#e0d6b0" />
        <path d="M822 480L860 470L895 495L890 540L920 600L905 610L870 545L850 500z" fill="#a8cc8a" />
        <path d="M992 520L1125 500L1140 570L1015 592z" fill="#cdc6ae" />
        <path d="M1110 1430L1150 1405L1195 1398V1408L1160 1415L1130 1432z" fill="#b4cc90" />
        <path d="M1190 122H1500V195H1190z" fill="#b9b492" />
        <Roads d={westStreets} kind="street" />
        <Roads d={westLanes} kind="lane" />
        <Roads d={westHighways} kind="highway" />
        <path d="M597 605v1M1190 792v1M858 985v1M897 1200v1M230 1200v1M676 830v1" stroke="#f1ecda" strokeWidth="13" strokeLinecap="round" vectorEffect="non-scaling-stroke" />
        <path d="M135 975L150 1000M185 1010L275 1075M280 1165L268 1215" stroke="#8f1e1a" strokeWidth="3" vectorEffect="non-scaling-stroke" />
      </g>
      <path d="M1540 455h90v22h-90zM2210 455h70v22h-70z" fill="#a9c98c" />
      <path d="M1625 455h588v22h-588z" fill="#9a9a9a" />
      <path d="M1760 455q60 16 120 20h60q-40-8-50-20z" fill="#b4b4b4" />
      <path d="M2060 455q60 8 75 20h40l-40-20z" fill="#7c7c7c" />
      <path d="M1568 458l-8 9l14 8" stroke="#333" strokeWidth="3" />
      <g transform="translate(2460 390) scale(.8801 .5357)">
        <path d="M622 1345Q600 1400 540 1412H622z" fill="#bece99" />
        <path d="M578 345L622 330V470H590z" fill="#cac8b2" />
        <Roads d={eastStreets} kind="street" />
        <Roads d={eastLanes} kind="lane" />
        <Roads d={eastHighways} kind="highway" />
        <path d="M485 820v1M597 892v1M485 963v1M215 1062v1M495 1155v1M72 1270v1" stroke="#9b6350" strokeWidth="17" strokeLinecap="round" vectorEffect="non-scaling-stroke" />
        <path d="M485 820v1M597 892v1M485 963v1M215 1062v1M495 1155v1M72 1270v1" stroke="#f1ecda" strokeWidth="11" strokeLinecap="round" vectorEffect="non-scaling-stroke" />
        <path d="M600 730L612 800L622 850" stroke="#8f1e1a" strokeWidth="4" vectorEffect="non-scaling-stroke" />
      </g>
      <g fontFamily="Liberation Sans, Arial, sans-serif" fill="#111" stroke="#e9e6d2" strokeWidth="4" style={halo}>
        <text x="1126" y="843" fontSize="40" style={halo}>Arese</text>
        <text x="2791" y="528" fontSize="40" style={halo}>Cassina Nuo</text>
        <text x="2800" y="994" fontSize="40" style={halo}>Cascina del</text>
        <text x="2354" y="466" fontSize="40" style={halo}>Cascina Brodolini</text>
        <text x="1093" y="1033" fontSize="23" style={halo}>164 m</text>
      </g>
      <g fontFamily="Liberation Sans, Arial, sans-serif" fontSize="25" fill="#555" stroke="#e2dfcb" strokeWidth="3">
        <text x="1263" y="689" style={halo}>Giada</text>
        <text x="838" y="940" style={halo}>Via</text>
        <text x="829" y="968" style={halo}>ovico</text>
        <text x="829" y="996" style={halo}>osto</text>
        <text x="1341" y="559" fill="#2f4f1f" style={halo}>Pa</text>
        <text x="1364" y="586" fill="#2f4f1f" style={halo}>C</text>
        <text x="2576" y="594" fontSize="27" transform="rotate(-12 2576 594)" fill="#444" style={halo}>Via-Umberto-Pace</text>
      </g>
      <path d="M1084 1037l10 15h-20z" fill="#f3efcb" stroke="#333" strokeWidth="2" />
      <path d="M2940 1086h12v-4h8v4h28v36h-6v4h-6v-4h-18v4h-8v-4h-10z" fill="#f4f4f4" stroke="#8d8d8d" strokeWidth="3" />
      <path d="M2948 1098h32M2948 1110h32" stroke="#8d8d8d" strokeWidth="3" />
    </svg>
  );
}

/* ---------- map window ---------- */

const Bar = ({ className = "" }) => <div className={`h-[38px] w-[2px] bg-[#b5b5b5] ${className}`} />;

function MapWindow() {
  return (
    <section className="flex min-h-0 flex-1 flex-col text-[28px] leading-[36px]">
      <div className="flex h-[55px] items-center">
        <div className="flex h-full w-[187px] items-center bg-[#c9c9c9] pl-[15px] text-[#6e6e6e]">
          <MapIcon size={39} />
          <span className="ml-4 pt-1">Map</span>
          <button aria-label="Close map" className="ml-[22px]"><Cross size={21} sw={2.500} /></button>
        </div>
        <Caret className="ml-auto mr-3 mt-3 text-[#5f5f5f]" />
      </div>
      <div className="flex min-h-0 flex-1 flex-col border-2 border-t-8 border-[#cfcfcf] bg-[#f7f9f8]">
        <MapView />
        <div className="flex h-[60px] shrink-0 items-center pl-[13px] pr-3 text-[#444]">
          <div className="grid h-[52px] w-[249px] border-2 border-[#a8a8a8] bg-white">
            <select aria-label="Map scale" className="col-start-1 row-start-1 appearance-none pl-[13px]">
              <option>1:30 780</option>
            </select>
            <Caret className="col-start-1 row-start-1 mr-2 self-center justify-self-end text-[#444]" />
          </div>
          <Bar className="mx-3" />
          <button aria-label="Snapping" className="flex h-[51px] w-[51px] items-center justify-center bg-[#9fd3f2]">
            <Svg w={38} h={40}>
              <path d="M1.500 1.500h26v15h-26zM1.500 16v11H14V1.500" stroke={GRAY} strokeWidth="2.500" />
              <path d="M28 20v19M18 30h20" stroke="#4a4a4a" strokeWidth="2.500" />
            </Svg>
          </button>
          <button aria-label="Dynamic constraints" className="ml-[10px]">
            <Svg w={40} h={36}>
              <path d="M4 34L36 20v14z" fill="#cfe4f4" />
              <path d="M1 2h11v5H1zM28 20h10v6H28zM30 2v9M25 6h11" stroke="#555" strokeWidth="2.500" />
              <path d="M9 18L22 5M8 12v7h7M16 4h7v7M2 34h36" stroke={BLUE} strokeWidth="2.500" />
              <path d="M0 28h7v7H0z" fill="#4d8a4d" />
            </Svg>
          </button>
          <button aria-label="Grid" className="ml-4">
            <Svg w={32} h={32}>
              <path d="M1 1h30v30H1zM1 8.500h30M1 16h30M1 23.500h30M8.500 1v30M16 1v30M23.500 1v30" stroke="#909090" strokeWidth="2" />
            </Svg>
          </button>
          <button aria-label="Inference" className="ml-5">
            <Svg w={40} h={40}>
              <path d="M0 0h18v18H0z" fill="#dcebd8" />
              <path d="M20 0v40M0 20h40" stroke="#555" strokeWidth="2.500" strokeDasharray="4 3" />
              <path d="M17 17h7v7h-7z" fill="#555" />
            </Svg>
          </button>
          <button aria-label="North arrow" className="ml-3 flex items-center text-[24px] font-bold text-[#3b97d3]">
            N
            <Svg w={20} h={36}><path d="M2 0v36M2 34L20 10" stroke="#555" strokeWidth="2" /></Svg>
          </button>
          <Bar className="ml-auto" />
          <Svg w={40} h={40} className="ml-[18px] opacity-60">
            <path d="M17 3h22v24H17z" fill="#e0f4fa" stroke={GRAY} strokeWidth="2.500" />
            <circle cx="12" cy="20" r="10" fill="#e8f4fb" stroke={BLUE} strokeWidth="2.500" />
            <path d="M12 15v10M7 20h10" stroke={GRAY} strokeWidth="2.500" />
            <path d="M18 28l9 10" stroke="#e9a04c" strokeWidth="4" />
          </Svg>
          <span className="ml-2 whitespace-nowrap text-[#9a9a9a]">Selected Features: 0</span>
          <Bar className="ml-[17px]" />
          <button aria-label="Pause drawing" className="ml-5">
            <Svg w={28} h={36}><path d="M0 0h10v36H0zM18 0h10v36H18z" fill={GRAY} /></Svg>
          </button>
          <Bar className="ml-[22px] mr-4" />
          <button aria-label="Refresh map"><Refresh /></button>
        </div>
      </div>
    </section>
  );
}

/* ---------- attribute table ---------- */

const rows = [
  ["508171.13", "5042426.9"],
  ["508171.63", "5042428.2"],
  ["508172.35", "5042429.4"],
  ["508173.65", "5042431.4"],
  ["508174.2", "5042432.2"],
  ["508174.74", "5042433.1"],
  ["508175.29", "5042433.9"],
  ["508175.84", "5042434.7"],
  ["508176.39", "5042435.6"],
];

function AttributeTable() {
  return (
    <section className="flex min-h-0 flex-1 flex-col text-[28px] leading-[36px] text-[#444]">
      <div className="flex h-[59px] shrink-0 items-center border-b-4 border-[#0078d0]">
        <div className="flex h-full w-[320px] items-center bg-[#0078d0] pl-[15px] text-white">
          <TableIcon />
          <span className="ml-4 pt-1">sponda_dx.csv</span>
          <button aria-label="Close table" className="ml-6"><Cross size={20} sw={2.500} /></button>
        </div>
        <Caret className="ml-auto mr-3 mt-1 text-[#5f5f5f]" />
      </div>
      <div className="flex min-h-0 flex-1 flex-col border-2 border-[#cfcfcf] bg-[#f7f9f8] pt-1">
        <div className="mx-[3px] flex h-[74px] shrink-0 items-center border-2 border-[#a8a8a8] bg-[#f1f1f1] pl-3 pr-4 text-[#c0c0c0]">
          <span className="font-bold text-[#444]">Field:</span>
          <button className="ml-5 flex items-center gap-3"><TableIcon faded /> Add</button>
          <button className="ml-6 flex items-center gap-3"><TableIcon faded /> Calculate</button>
          <div className="ml-6 h-[56px] w-[2px] bg-[#b5b5b5]" />
          <span className="ml-[18px] font-bold text-[#444]">Selection:</span>
          <button className="ml-auto">Copy</button>
          <div className="ml-6 h-[56px] w-[2px] bg-[#b5b5b5]" />
          <span className="ml-[18px] font-bold text-[#444]">Rows:</span>
          <button className="ml-5 flex items-center text-[#8a8a8a]">
            <Svg w={38} h={36} className="mr-[10px] opacity-60">
              <path d="M1.500 1.500h35v28h-35zM1.500 11h35M1.500 20h35M12 1.500v28" stroke={GRAY} strokeWidth="2.500" />
              <path d="M10 28h12M16 22v13" stroke={GRAY} strokeWidth="3" />
            </Svg>
            Insert
            <Caret className="ml-2" />
          </button>
          <button aria-label="Table options" className="ml-[121px]"><Hamburger /></button>
        </div>
        <div className="mx-[3px] mt-1 flex min-h-0 flex-1 border-y-2 border-[#cacaca] bg-white">
          <div className="min-h-0 flex-1 overflow-hidden">
            <table className="border-separate border-spacing-0">
              <thead>
                <tr className="h-[60px]">
                  <th className="w-[62px] border-b-2 border-r-2 border-[#cacaca] pr-[6px] align-bottom">
                    <Svg w={25} h={26} className="mb-1 ml-auto"><path d="M25 0v26H0z" fill="#c4c4c4" /></Svg>
                  </th>
                  <td className="w-[10px]" />
                  <th className="w-[163px] border-b-4 border-l-2 border-r-2 border-b-[#007ac2] border-l-[#cacaca] border-r-[#cacaca] bg-[#c9e2f5] pl-4 text-left font-bold">Field1</th>
                  <th className="w-[163px] border-b-2 border-r-2 border-[#cacaca] bg-[#ebebeb] pl-4 text-left font-bold">Field2</th>
                </tr>
              </thead>
              <tbody>
                {rows.map(([a, b], i) => (
                  <tr key={a} className="h-[62px]">
                    <th className={`border-b-2 border-[#cacaca] text-center font-normal text-[#777] ${i === 0 ? "border-r-[6px] border-r-[#007ac2] bg-[#c9e2f5] pr-0" : "border-r-2 bg-[#ebebeb]"}`}>{i + 1}</th>
                    <td />
                    <td className={`border-b-2 border-l-2 border-r-2 border-[#cacaca] pr-3 text-right ${i === 0 ? "bg-[#c9e4f8]" : i % 2 ? "bg-[#ebebeb]" : ""}`}>{a}</td>
                    <td className={`border-b-2 border-r-2 border-[#cacaca] pr-3 text-right ${i % 2 ? "bg-[#ebebeb]" : ""}`}>{b}</td>
                  </tr>
                ))}
              </tbody>
            </table>
          </div>
          <div className="flex w-[50px] flex-col items-center bg-[#f1f1f1] py-4 text-[#5f5f5f]">
            <Svg w={18} h={12}><path d="M1 10l8-8l8 8" stroke={GRAY} strokeWidth="2.500" /></Svg>
            <div className="mt-4 h-[54px] w-[22px] rounded-full bg-[#c4c4c4]" />
            <Svg w={18} h={12} className="mt-auto"><path d="M1 2l8 8l8-8" stroke={GRAY} strokeWidth="2.500" /></Svg>
          </div>
        </div>
        <div className="flex h-[69px] shrink-0 items-center px-[3px]">
          <button aria-label="Show all records" className="flex h-[56px] w-[54px] items-center justify-center border-[3px] border-[#0f6cb4] bg-[#a9c6e2]">
            <Svg w={38} h={34}>
              <path d="M1.500 1.500h35v31h-35zM1.500 9h35M1.500 17h35M1.500 25h35" fill="#fff" stroke={GRAY} strokeWidth="3" />
            </Svg>
          </button>
          <button aria-label="Show selected records" className="mb-2 ml-3">
            <Svg w={38} h={26}>
              <path d="M1.500 1.500h35v23h-35zM1.500 9h35M1.500 17h35" fill="#b3e8f8" stroke={GRAY} strokeWidth="3" />
            </Svg>
          </button>
          <button aria-label="First record" className="ml-[34px]">
            <Svg w={24} h={24}><path d="M2 0v24" stroke="#bdbdbd" strokeWidth="3" /><path d="M24 0v24L6 12z" fill="#bdbdbd" /></Svg>
          </button>
          <button aria-label="Last record" className="ml-[34px]">
            <Svg w={24} h={24}><path d="M22 0v24" stroke={GRAY} strokeWidth="3" /><path d="M0 0v24l18-12z" fill={GRAY} /></Svg>
          </button>
          <span className="ml-[30px] w-[275px] whitespace-nowrap">0 of *2 000 selected</span>
          <button className="h-[51px] w-[175px] border-[3px] border-[#555] bg-white">Load All</button>
          <span className="ml-auto">Filters:</span>
          <Svg w={40} h={40} className="ml-[22px] opacity-35">
            <circle cx="20" cy="20" r="18" stroke={GRAY} strokeWidth="2.500" />
            <path d="M20 8v12h9M10 26l12 8l8-8" stroke={GRAY} strokeWidth="2.500" />
          </Svg>
          <Svg w={40} h={40} className="ml-3 opacity-35">
            <circle cx="20" cy="20" r="18" stroke={GRAY} strokeWidth="2.500" strokeDasharray="6 3" />
            <path d="M20 8v12h9M12 20h8v10" stroke={GRAY} strokeWidth="2.500" />
          </Svg>
          <Svg w={42} h={40} className="ml-3">
            <path d="M1 2h28L18 14v14h-6V14z" fill="#cacaca" stroke={GRAY} strokeWidth="2.500" />
            <path d="M22 18h18v18H22zM28 18v18M34 18v18M22 24h18M22 30h18" fill="#d2eaf9" stroke={BLUE} strokeWidth="2.500" />
            <path d="M24 6h16" stroke={GRAY} strokeWidth="3" />
          </Svg>
          <Svg w={24} h={40} className="ml-6 opacity-50">
            <path d="M2 12L12 2l10 10M12 2v36M2 28l10 10l10-10" stroke="#b98243" strokeWidth="3" />
            <path d="M0 20h24" stroke="#68a868" strokeWidth="3" />
          </Svg>
          <button aria-label="Zoom out" className="ml-[36px]">
            <Svg w={20} h={20}><path d="M2 10h16" stroke="#444" strokeWidth="3.500" /></Svg>
          </button>
          <input type="range" aria-label="Table zoom" defaultValue="50" className="ml-[18px] h-[28px] w-[252px] appearance-none bg-[linear-gradient(#9a9a9a,#9a9a9a)] bg-[length:100%_5px] bg-center bg-no-repeat [&::-webkit-slider-thumb]:h-[28px] [&::-webkit-slider-thumb]:w-[11px] [&::-webkit-slider-thumb]:appearance-none [&::-webkit-slider-thumb]:bg-[#5f5f5f]" />
          <button aria-label="Zoom in" className="ml-4">
            <Svg w={20} h={20}><path d="M0 10h20M10 0v20" stroke="#444" strokeWidth="3.500" /></Svg>
          </button>
          <div className="ml-3 grid h-[50px] w-[157px] items-center bg-white">
            <select aria-label="Zoom level" className="col-start-1 row-start-1 appearance-none pl-[22px]">
              <option>100%</option>
            </select>
            <Caret className="col-start-1 row-start-1 mr-[9px] justify-self-end text-[#444]" />
          </div>
          <Bar className="mx-[14px]" />
          <button aria-label="Refresh table" className="mr-3"><Refresh /></button>
        </div>
      </div>
    </section>
  );
}

/* ---------- tool result popup ---------- */

const rowRanges = [[7, 22], [23, 37], [38, 52], [53, 67], [68, 82], [83, 97], [98, 109], [110, 121], [122, 133], [134, 145], [146, 157]];

const listRange = ([from, to]) => Array.from({ length: to - from + 1 }, (_, i) => `${from + i},`).join(" ");

function ToolResult() {
  return (
    <div role="dialog" aria-label="XY Table To Point" className="absolute left-[541px] top-[83px] z-20 flex h-[1113px] w-[1100px] flex-col border-[3px] border-[#0079c1] bg-white px-4 pt-4 text-[28px] leading-[36px] text-[#444] shadow-[0_10px_30px_rgba(0,0,0,0.35)]">
      <div className="flex h-[72px] shrink-0 items-center bg-[#fff6cd] pl-8 pr-4">
        <WarnIcon w={33} />
        <h2 className="ml-10 flex-1 whitespace-nowrap text-[33px] font-semibold leading-[44px]">XY Table To Point (Data Management Tools)</h2>
        <button aria-label="Close" className="text-[#5f5f5f]"><Cross size={27} sw={3} /></button>
      </div>
      <dl className="ml-[6px] mt-4 text-[26px] leading-[52px] text-[#6e6e6e]">
        <div className="flex gap-[7px]"><dt className="font-bold">Started:</dt><dd>Today at 12:25:45 PM</dd></div>
        <div className="flex gap-[7px]"><dt className="font-bold">Completed:</dt><dd>Today at 12:25:47 PM</dd></div>
        <div className="flex gap-[7px]"><dt className="font-bold">Elapsed Time:</dt><dd>2 Seconds</dd></div>
      </dl>
      <p className="ml-2 mt-3 whitespace-nowrap font-['DejaVu_Sans_Mono',monospace] text-[27px] text-[#95820f]">
        <WarnIcon w={30} className="mr-2 inline-block align-[-5px]" />
        <a href="#warning-100160" className="font-bold underline underline-offset-4">WARNING 100160:</a> Some of the features have invalid geometry and
        <br />
        have been removed from the result
      </p>
      <div className="ml-2 mt-[22px] flex h-[52px] items-start gap-[24px] text-[30px] leading-[47px]">
        <button>Parameters</button>
        <button>Environments</button>
        <button className="border-b-[5px] border-[#007ac2] font-semibold">Messages (2)</button>
        <button aria-label="Copy messages" className="ml-auto mt-[6px]">
          <Svg w={36} h={41}>
            <path d="M11 1.500h14l9 9V32H11z" fill="#fff" stroke={GRAY} strokeWidth="2.500" />
            <path d="M1.500 9h13l8 8v22h-21z" fill="#fff" stroke={GRAY} strokeWidth="2.500" />
            <path d="M25 1.500V11h9M14 9v8h8" stroke={GRAY} strokeWidth="2.500" />
            <path d="M5 20h8M5 25h14M5 30h14M5 35h14" stroke={BLUE} strokeWidth="2.500" />
          </Svg>
        </button>
      </div>
      <div className="ml-[7px] mt-[13px] flex gap-[9px]">
        <button aria-label="Information" className="flex size-[51px] items-center justify-center bg-[#9fd3f2]">
          <Svg w={40} h={40}>
            <circle cx="20" cy="20" r="19.500" fill="#68b0e0" />
            <path d="M20 8v5M16 17h4v13M15 31h10" stroke="#fff" strokeWidth="4" />
          </Svg>
        </button>
        <button aria-label="Warnings" className="flex size-[51px] items-center justify-center bg-[#9fd3f2]">
          <Svg w={36} h={36}>
            <path d="M18 3L34 33H2z" fill="#fac98e" stroke="#eb9d4a" strokeWidth="2.500" strokeLinejoin="round" />
            <path d="M18 10v14M18 26v4" stroke="#4a4a4a" strokeWidth="4.500" />
          </Svg>
        </button>
        <button aria-label="Errors" className="flex size-[51px] items-center justify-center bg-[#9fd3f2]">
          <Svg w={40} h={40}>
            <circle cx="20" cy="20" r="19.500" fill="#cb6748" />
            <path d="M11 11l18 18M29 11L11 29" stroke="#fff" strokeWidth="5" />
          </Svg>
        </button>
      </div>
      <div className="mb-[27px] mt-4 flex min-h-0 flex-1">
        <div className="ml-[6px] min-h-0 flex-1 overflow-hidden whitespace-nowrap font-['DejaVu_Sans_Mono',monospace] text-[27px] text-[#95820f]">
          <p className="mt-1 font-['Open_Sans','Segoe_UI',sans-serif] text-[28px] text-[#333]">Start Time: Wednesday, January 12, 2022 12:25:45 PM</p>
          <p className="mt-5 leading-[40px]">
            <WarnIcon w={34} className="mr-[14px] inline-block align-[-6px]" />
            <a href="#warning-100160" className="underline underline-offset-4">WARNING 100160:</a> Some of the features have invalid geometry
            <br />
            and have been removed from the result
          </p>
          <div className="mt-4">
            <p className="leading-[40px]">
              <WarnIcon w={34} className="mr-[14px] inline-block align-[-6px]" />
              <a href="#warning-000192" className="underline underline-offset-4">WARNING 000192:</a> Invalid value for rows: 1, 2, 3, 4, 5, 6,
            </p>
            {rowRanges.map((r) => (
              <p key={r[0]}>{listRange(r)}</p>
            ))}
          </div>
        </div>
        <div className="flex w-[42px] flex-col items-center bg-[#f1f1f1] pb-3 pt-4">
          <Caret className="rotate-180 scale-125 text-[#a0a0a0]" />
          <div className="mt-[17px] h-10 w-[38px] bg-[#c1c1c1]" />
          <Caret className="mt-auto scale-125 text-[#444]" />
        </div>
      </div>
    </div>
  );
}

/* ---------- catalog pane ---------- */

const FolderBase = () => (
  <g>
    <path d="M0 4h6l3-3h8l3 3h17v29H0z" fill="#dac54a" />
    <path d="M4 7h29v6H4z" fill="#fff" />
  </g>
);

const FolderIcon = ({ children }) => (
  <Svg w={40} h={38}>
    <FolderBase />
    {children}
  </Svg>
);

const FileIcon = () => (
  <Svg w={34} h={41}>
    <path d="M2 1.500h22l8 10V39H2z" fill="#fff" stroke={GRAY} strokeWidth="2.500" />
    <path d="M23 1.500V12h9" stroke={GRAY} strokeWidth="2.500" />
    <path d="M6 11h12M6 16.500h22M6 21.500h22M6 26.500h22M6 32h22" stroke={BLUE} strokeWidth="2.500" />
  </Svg>
);

const Cylinder = ({ x = 0, y = 0, s = 1 }) => (
  <g transform={`translate(${x} ${y}) scale(${s})`}>
    <path d="M1.500 6v20q2 4 14 4.500q12-.500 14-4.500V6" fill="#f4f4f4" stroke={GRAY} strokeWidth="2.500" />
    <path d="M20 11l8-3v18l-8 3z" fill="#d8d8d8" />
    <ellipse cx="15.500" cy="6" rx="14" ry="5" fill="#fff" stroke={GRAY} strokeWidth="2.500" />
  </g>
);

const catalogIcons = {
  maps: (
    <FolderIcon>
      <path d="M7 13h24v24H7z" fill="#9cc29c" stroke={GRAY} strokeWidth="2.500" />
      <path d="M22 15h7v20H16q0-8 5-10z" fill={PALE} />
    </FolderIcon>
  ),
  toolboxes: (
    <FolderIcon>
      <path d="M15 19v-5h10v5" stroke={GRAY} strokeWidth="3" />
      <path d="M7 18h26v19H7z" fill="#c8684a" />
      <path d="M8 27h24" stroke="#fff" strokeWidth="2.500" />
      <path d="M17 24h6v6h-6z" fill="#8a8a8a" />
    </FolderIcon>
  ),
  databases: (
    <FolderIcon>
      <path d="M5 14h28v24H5z" fill="#f7f9f8" />
      <Cylinder x={7} y={15} s={0.72} />
    </FolderIcon>
  ),
  styles: (
    <FolderIcon>
      <path d="M4 26Q6 13 20 13Q34 13 33 20Q26 24 24 31Q12 38 4 26z" fill="#f7f9f8" stroke={GRAY} strokeWidth="2.500" />
      <circle cx="13" cy="21" r="2" fill={BLUE} />
      <circle cx="19" cy="18" r="2" fill="#c8684a" />
      <path d="M38 15L24 31" stroke={GRAY} strokeWidth="4" />
      <path d="M24 30l-6 7l1-6z" fill="#c99245" />
    </FolderIcon>
  ),
  folders: (
    <FolderIcon>
      <path d="M15 15l13 9l-13 9z" fill="#5f5f5f" stroke="#f7f9f8" strokeWidth="2" />
    </FolderIcon>
  ),
  home: (
    <Svg w={45} h={41}>
      <FolderBase />
      <path d="M18 26L31 13l13 13v14H19z" fill="#f7f9f8" />
      <path d="M19 27L31 16l12 11M22 26v13h18V26" stroke={GRAY} strokeWidth="2.500" />
      <path d="M32 29h5v10h-5z" fill="#b98243" />
      <path d="M25 29h4v5h-4z" fill={BLUE} />
    </Svg>
  ),
  folder: <FolderIcon />,
  gdb: <Svg w={38} h={34}><Cylinder x={4} y={1} /></Svg>,
  xlsx: (
    <Svg w={41} h={41}>
      <path d="M1.500 1.500h38v38h-38z" fill="#fff" stroke={GRAY} strokeWidth="2.500" />
      <path d="M3 3h35v5H3z" fill="#68a868" />
      <path d="M6 12h16v14H6zM6 17h16M6 22h16M11 12v14M17 12v14" stroke={GRAY} strokeWidth="2" />
      <path d="M18 19h17v16H18z" fill="#fff" stroke={GRAY} strokeWidth="2" />
      <path d="M19 20h15v4H19z" fill="#6cb4e4" />
      <path d="M18 25h17M18 30h17M24 25v10M30 25v10" stroke={GRAY} strokeWidth="2" />
    </Svg>
  ),
  toolbox: <Svg w={41} h={36} vb="0 4 80 66"><ToolboxShape /></Svg>,
  raster: (
    <Svg w={41} h={35}>
      <rect x="1.500" y="1.500" width="38" height="32" rx="6" fill={PALE} stroke={GRAY} strokeWidth="2.500" />
      <path d="M3 10h35M3 17h35M3 25h35M9 3v29M17 3v29M25 3v29M33 3v29" stroke={BLUE} strokeWidth="3" />
      <path d="M11 19h5v5h-5zM26 19h5v5h-5zM11 4h5v4h-5z" fill="#8cbf8c" />
    </Svg>
  ),
  file: <FileIcon />,
  locators: (
    <FolderIcon>
      <path d="M4 28L16 12l13 16l-3 9H8z" fill="#f7f9f8" />
      <path d="M6 25L16 13l10 12z" fill="#e89080" stroke="#cf5434" strokeWidth="2.500" />
      <path d="M9 25v12h14V25" fill="#fff" stroke={GRAY} strokeWidth="2.500" />
      <path d="M14 27h4v5h-4z" fill={BLUE} />
      <path d="M6 37h20" stroke="#68a868" strokeWidth="3" />
    </FolderIcon>
  ),
};

const catalogTree = [
  { label: "Maps", icon: "maps", level: 0, state: "closed" },
  { label: "Toolboxes", icon: "toolboxes", level: 0, state: "closed" },
  { label: "Databases", icon: "databases", level: 0, state: "closed" },
  { label: "Styles", icon: "styles", level: 0, state: "closed" },
  { label: "Folders", icon: "folders", level: 0, state: "open" },
  { label: "1GIS", icon: "home", level: 1, state: "open" },
  { label: ".backups", icon: "folder", level: 2, state: "closed" },
  { label: "ImportLog", icon: "folder", level: 2, state: "closed" },
  { label: "mappa Nirone 2.gdb", icon: "gdb", level: 2, state: "closed" },
  { label: "sponda_dx.xlsx", icon: "xlsx", level: 2, state: "closed" },
  { label: "mappa Nirone 2.tbx", icon: "toolbox", level: 2, state: "closed" },
  { label: "mosaic_final.tif", icon: "raster", level: 2, state: "closed" },
  { label: "contorno_nirone.txt", icon: "file", level: 2 },
  { label: "sponda_dx.csv", icon: "file", level: 2, selected: true },
  { label: "sponda_dx.txt", icon: "file", level: 2 },
  { label: "sponda_sx.txt", icon: "file", level: 2 },
  { label: "Locators", icon: "locators", level: 0, state: "closed" },
];

const indent = ["pl-[27px]", "pl-[67px]", "pl-[107px]"];

function CatalogPane() {
  return (
    <aside className="flex w-[799px] shrink-0 flex-col border-2 border-[#cfcfcf] bg-[#f7f9f8] text-[28px] leading-[36px] text-[#444]">
      <PaneTitle title="Catalog" />
      <div className="mt-[26px] flex h-[50px] items-start gap-[26px] pl-[15px] pr-[17px] text-[30px]">
        <button className="h-[50px] border-b-[5px] border-[#007ac2] pb-2 font-semibold">Project</button>
        <button>Portal</button>
        <button>Favorites</button>
        <button aria-label="Catalog options" className="ml-auto mt-[5px]"><Hamburger /></button>
      </div>
      <div className="mt-6 flex items-center pl-3 pr-3">
        <button aria-label="Back">
          <Svg w={45} h={45}>
            <circle cx="22.500" cy="22.500" r="21" stroke="#bdbdbd" strokeWidth="2.500" />
            <path d="M35 22.500H12M22 12L11.500 22.500L22 33" stroke="#bdbdbd" strokeWidth="4" />
          </Svg>
        </button>
        <div className="ml-[14px] flex h-[60px] w-12 items-center justify-center border-2 border-r-0 border-[#cfcfcf]">
          <Svg w={32} h={30} className="opacity-60">
            <path d="M1 15L16 2l15 13M5 13v14h22V13" fill="#fff" stroke={GRAY} strokeWidth="2.500" />
            <path d="M17 17h6v10h-6z" fill="#c99a78" />
            <path d="M9 16h5v5H9z" fill={BLUE} />
            <path d="M1 28h30" stroke="#68a868" strokeWidth="3" />
          </Svg>
        </div>
        <label className="flex h-[60px] flex-1 items-center border-2 border-[#909090] bg-white pr-[15px]">
          <input aria-label="Search Project" placeholder="Search Project" className="w-full pl-3 italic outline-none placeholder:text-[#444]" />
          <Magnifier />
          <Caret className="ml-5 text-[#bdbdbd]" />
        </label>
      </div>
      <ul className="mt-[14px] flex-1 pr-4">
        {catalogTree.map((n) => (
          <li key={n.label} className={`flex h-[59px] items-center ${indent[n.level]}`}>
            <span className="flex w-[26px] shrink-0 items-center pb-2">
              {n.state === "closed" && <TriClosed className="ml-[6px]" />}
              {n.state === "open" && <TriOpen />}
            </span>
            <span className={`flex h-full flex-1 items-center border-2 ${n.selected ? "border-[#909090] bg-[#cacaca]" : "border-transparent"}`}>
              <span className="flex w-[70px] pl-[9px]">
                <span className="flex w-[43px] justify-center">{catalogIcons[n.icon]}</span>
              </span>
              {n.label}
            </span>
          </li>
        ))}
      </ul>
      <div className="flex h-[52px] shrink-0 whitespace-nowrap">
        <button className="w-[130px] border-r-2 border-[#cfcfcf] text-[#007ac2]">Catalog</button>
        <div className="flex flex-1 justify-between border-t-2 border-[#cfcfcf] bg-[#f1f1f1] pl-4 pr-5">
          <button>Exploratory A...</button>
          <button>Create Feat...</button>
          <button>Chart Prope...</button>
        </div>
      </div>
    </aside>
  );
}

/* ---------- taskbar ---------- */

const OfficeIcon = ({ color, letter, children }) => (
  <Svg w={56} h={56}>
    <path d="M28 6h26v42H28z" fill="#fff" stroke={color} strokeWidth="2.500" />
    <path d="M0 6L32 0v56L0 49z" fill={color} />
    {children}
    <text x="15" y="39" fontSize="30" fontWeight="700" textAnchor="middle" fill="#fff" fontFamily="Open Sans, sans-serif">{letter}</text>
  </Svg>
);

function Taskbar() {
  const slot = "flex h-full w-[124px] items-center justify-center border-b-[5px]";
  return (
    <footer className="flex h-[100px] shrink-0 bg-[#1c1c1c] text-white">
      <button aria-label="Start" className={`${slot} mr-[2px] border-transparent pr-1`}>
        <Svg w={41} h={41}><path d="M0 6l17-2.500V19H0zM19 3l22-3v19H19zM0 21h17v16L0 34.500zM19 21h22v20l-22-3z" fill="#fff" /></Svg>
      </button>
      <button aria-label="Chrome" className={`${slot} border-transparent bg-[linear-gradient(#76b9ed,#76b9ed)] bg-[length:102px_5px] bg-[14px_100%] bg-no-repeat bg-origin-border`}>
        <Svg w={56} h={56}>
          <circle cx="28" cy="28" r="28" fill="#fbcb3f" />
          <path d="M28 28H24L4 14A28 28 0 0 0 27 56L40 34z" fill="#1da362" />
          <path d="M28 28L4 14A28 28 0 0 1 52.500 15H28z" fill="#db4f43" />
          <circle cx="28" cy="28" r="13" fill="#fff" />
          <circle cx="28" cy="28" r="10.500" fill="#4a86ee" />
        </Svg>
      </button>
      <button aria-label="File Explorer" className={`${slot} border-transparent bg-[linear-gradient(#76b9ed,#76b9ed)] bg-[length:102px_5px] bg-[14px_100%] bg-no-repeat bg-origin-border`}>
        <Svg w={54} h={46}>
          <path d="M0 0h22l5 5h27v38H0z" fill="#fed667" />
          <path d="M0 0h22l4 5l-4 5H0z" fill="#e0a000" />
          <path d="M9 46V28q0-4 4-4h28q4 0 4 4v18h-9V33H18v13z" fill="#3b97dd" />
        </Svg>
      </button>
      <button aria-label="PowerPoint" className={`${slot} border-transparent`}>
        <OfficeIcon color="#d24726" letter="P">
          <path d="M36 14v10h9a9 9 0 1 1-9-10zM34 38h16M34 43h16" fill="#d24726" stroke="#d24726" strokeWidth="2.500" />
        </OfficeIcon>
      </button>
      <button aria-label="Word" className={`${slot} border-transparent`}>
        <OfficeIcon color="#2a5699" letter="W">
          <path d="M33 13h17M33 19h17M33 25h17M33 31h17M33 37h17M33 43h17" stroke="#2a5699" strokeWidth="2.500" />
        </OfficeIcon>
      </button>
      <button aria-label="Excel" className={`${slot} border-transparent`}>
        <OfficeIcon color="#207245" letter="X">
          <path d="M33 14h17M33 21h17M33 28h17M33 35h17M33 42h17M41 8v40" stroke="#207245" strokeWidth="2.500" />
        </OfficeIcon>
      </button>
      <button aria-label="MATLAB" className={`${slot} border-transparent`}>
        <Svg w={60} h={56}>
          <path d="M0 32l18-10L40 0q-6 24-20 40l-6-2z" fill="#4f8fc4" />
          <path d="M14 38q14-4 27-38q6 4 19 46q-8-10-16-8q-8 2-18 18q-4-14-12-18z" fill="#d8501c" />
          <path d="M41 0q-4 24-15 56q8-4 12-16q6-4 6-8z" fill="#f6b13c" />
          <path d="M14 38q14-4 27-38q-6 24-14 40z" fill="#5e1414" />
        </Svg>
      </button>
      <button aria-label="ArcGIS Pro" className={`${slot} border-[#76b9ed] bg-[#4a4a4a]`}>
        <Svg w={52} h={60}>
          <path d="M26 0l26 15v30L26 60L0 45V15z" fill="#0a6fe0" />
          <circle cx="26" cy="31" r="17" fill="#fff" />
          <path d="M14 22q8-7 16-5q4 4-2 6q2 4 5 5q2 6-5 7q-2 6-6 10q-6-4-4-12q-6-4-4-11zM36 40q5-5 5-12q3 10-3 16z" fill="#0a6fe0" />
        </Svg>
      </button>
      <button aria-label="Acrobat" className={`${slot} border-transparent bg-[linear-gradient(#76b9ed,#76b9ed)] bg-[length:102px_5px] bg-[14px_100%] bg-no-repeat bg-origin-border`}>
        <Svg w={58} h={56}>
          <path d="M1 0h56v56H1z" fill="#ececec" />
          <path d="M27 10q3-3 4 2q0 12-12 32q-4 6-7 4q-1-4 8-8q12-6 26-6q6 1 4 4q-4 2-10-4q-14-14-13-24z" stroke="#e2231a" strokeWidth="3" />
        </Svg>
      </button>
      <div className="ml-auto flex items-center whitespace-nowrap pr-[12px] text-[34px] leading-[44px]">
        <Svg w={48} h={48}>
          <circle cx="24" cy="24" r="23" fill="#f9a825" />
          <circle cx="22" cy="20" r="17" fill="#fbb940" />
        </Svg>
        <span className="ml-[26px] w-[74px]">5°C</span>
        <span className="w-[212px]">Soleggiato</span>
        <Svg w={26} h={38}>
          <ellipse cx="13" cy="19" rx="13" ry="18" fill="#0078d7" />
          <path d="M6 12l13 13l-6 6V7l6 6L6 26" stroke="#fff" strokeWidth="2.500" />
        </Svg>
        <Svg w={42} h={42} className="ml-[27px]">
          <rect x="1" y="1" width="40" height="40" rx="6" fill="#2f93e0" />
          <circle cx="18" cy="18" r="9" stroke="#fff" strokeWidth="3" />
          <circle cx="30" cy="30" r="6" fill="#fff" />
          <path d="M8 32h14" stroke="#fff" strokeWidth="3" />
        </Svg>
        <Svg w={40} h={28} className="ml-[20px]">
          <path d="M0 0h40v28H0z" fill="#3c6e10" />
          <path d="M4 14q8-12 18-8q8 4 10 8q-6 9-14 9t-14-9z" fill="#76b900" />
          <circle cx="18" cy="14" r="5" fill="#1c1c1c" />
        </Svg>
        <Svg w={42} h={30} className="ml-[20px]">
          <path d="M11 9h28v18H11z" stroke="#fff" strokeWidth="2.500" />
          <path d="M15 13h16v10H15z" fill="#fff" />
          <path d="M3 4v8q0 4 4 4t4-4V4zM5 0v4M10 0v4M7 16v10" stroke="#fff" strokeWidth="2.500" />
        </Svg>
        <Svg w={42} h={34} className="ml-[18px]">
          <path d="M10 4h30v20H10zM24 24v8M16 32h16" stroke="#fff" strokeWidth="2.500" />
          <path d="M2 8h10v10H2zM7 18v14h9" fill="#1c1c1c" stroke="#fff" strokeWidth="2.500" />
        </Svg>
        <Svg w={42} h={34} className="ml-[17px]">
          <path d="M2 12h7l8-8v26l-8-8H2z" stroke="#fff" strokeWidth="2.500" />
          <path d="M23 11q4 6 0 12M29 7q7 10 0 20M35 3q10 14 0 28" stroke="#fff" strokeWidth="2.500" />
        </Svg>
        <div className="ml-[20px] w-[144px] pt-[2px] text-center text-[28px] leading-[47px]">
          <div>12:25 PM</div>
          <div>1/12/2022</div>
        </div>
        <Svg w={42} h={42} className="ml-[42px]">
          <path d="M2 3h38v28H28l-7 8v-8H2z" stroke="#fff" strokeWidth="2.500" />
        </Svg>
        <div className="ml-[47px] h-[100px] w-[2px] bg-[#555]" />
      </div>
    </footer>
  );
}

export default function App() {
  return (
    <div className="flex h-screen flex-col overflow-hidden bg-[#f1f1f1] font-['Open_Sans','Segoe_UI',sans-serif]">
      <WindowHeader />
      <Ribbon />
      <main className="flex min-h-0 flex-1 gap-4 pb-[17px] pl-[15px] pr-[17px] pt-[14px]">
        <ContentsPane />
        <div className="relative flex min-w-0 flex-1 flex-col gap-4 pb-[3px]">
          <MapWindow />
          <AttributeTable />
          <ToolResult />
        </div>
        <CatalogPane />
      </main>
      <Taskbar />
    </div>
  );
}
